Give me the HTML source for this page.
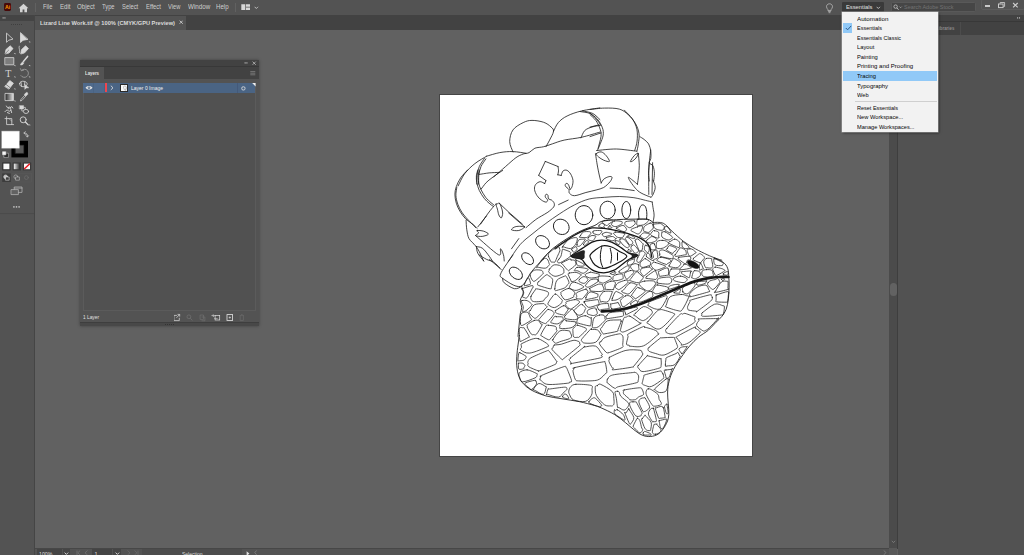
<!DOCTYPE html>
<html>
<head>
<meta charset="utf-8">
<title>Lizard Line Work.tif @ 100% (CMYK/GPU Preview)</title>
<style>
html,body{margin:0;padding:0;}
body{width:1024px;height:555px;overflow:hidden;position:relative;background:#616161;font-family:"Liberation Sans",sans-serif;font-size:6.4px;color:#d6d6d6;}
div,span,svg{position:absolute;box-sizing:border-box;}
.t{white-space:nowrap;line-height:8px;height:8px;}
#topbar{left:0;top:0;width:1024px;height:15px;background:#535353;}
#topbar .m{top:3.2px;color:#cecece;}
#tabbar{left:35px;top:15px;width:863px;height:14.5px;background:#424242;}
#doctab{left:0;top:1px;width:151px;height:13.5px;background:#535353;}
#toolbar{left:0;top:15px;width:35px;height:540px;background:#535353;border-right:1px solid #454545;}
#toolhead{left:0;top:0;width:34px;height:6px;background:#444444;}
#rightpanel{left:898px;top:15px;width:126px;height:540px;background:#525252;}
#vscroll{left:889px;top:29.5px;width:9px;height:519px;background:#4b4b4b;border-right:1px solid #3e3e3e;}
#statusbar{left:35px;top:548px;width:854px;height:7px;background:#535353;}
#artboard{left:439px;top:94px;width:314px;height:363px;background:#fff;border:1px solid #454545;}
#layers{left:80px;top:59.5px;width:178.5px;height:266.5px;background:#535353;box-shadow:0 0 3px rgba(0,0,0,0.35);}
#menu{left:842px;top:12.4px;width:96px;height:120px;background:#f2f2f2;box-shadow:0 0 0 0.5px #a8a8a8,1px 1px 2.5px rgba(0,0,0,0.55);color:#1a1a1a;}
#menu .t{left:14.7px;color:#050505;font-size:6.2px;}
</style>
</head>
<body>
<!-- canvas artboard -->
<div id="artboard"></div>
<svg style="left:440px;top:95px" width="312" height="361" viewBox="440 95 312 361" fill="none" stroke="#161616" stroke-linecap="round" stroke-linejoin="round">
<path d="M601.0 341.6C600.1 342.4 599.6 341.7 599.5 342.3C599.3 342.8 599.1 343.4 600.2 345.1C601.4 346.8 604.9 351.1 606.2 352.3C607.6 353.6 607.8 352.5 608.3 352.5C608.8 352.5 607.1 353.4 609.4 352.5C611.7 351.7 619.9 348.8 622.1 347.5C624.3 346.2 622.6 346.3 622.7 344.6C622.9 342.8 623.3 338.6 623.0 336.9C622.8 335.3 621.9 334.9 621.1 334.4C620.3 333.9 621.0 333.5 618.3 334.0C615.7 334.5 608.0 336.2 605.2 337.4C602.3 338.7 602.0 340.8 601.0 341.6ZM548.4 325.3C546.7 325.2 547.0 324.6 545.8 326.1C544.6 327.6 541.7 332.7 541.0 334.4C540.4 336.1 540.8 335.3 542.0 336.2C543.2 337.1 546.9 339.2 548.3 339.7C549.7 340.1 548.8 340.4 550.2 339.0C551.6 337.6 555.7 332.8 556.7 331.3C557.8 329.8 556.6 330.6 556.4 329.8C556.2 329.0 556.9 327.3 555.6 326.5C554.2 325.8 550.0 325.4 548.4 325.3ZM654.4 244.3C654.1 243.4 654.7 243.2 654.0 243.3C653.2 243.4 650.6 243.8 650.2 244.8C649.7 245.9 650.4 248.9 651.4 249.6C652.4 250.3 655.5 249.8 656.0 249.0C656.5 248.1 654.7 245.3 654.4 244.3ZM646.0 245.3C645.7 245.3 645.1 245.1 644.9 245.8C644.6 246.5 644.2 248.5 644.5 249.6C644.9 250.7 646.4 251.9 647.1 252.4C647.7 252.8 647.9 252.6 648.2 252.3C648.6 252.1 648.9 251.8 649.1 250.8C649.2 249.8 649.4 247.2 649.0 246.4C648.7 245.6 647.2 246.0 646.7 245.8C646.2 245.6 646.3 245.3 646.0 245.3ZM634.6 221.4C634.5 220.8 635.7 220.7 634.2 220.7C632.8 220.7 627.5 221.1 625.9 221.6C624.4 222.2 624.7 223.4 624.9 224.2C625.2 225.0 626.4 226.0 627.3 226.6C628.2 227.2 628.9 228.0 630.2 227.6C631.5 227.2 634.3 225.2 635.0 224.1C635.8 223.1 634.7 222.0 634.6 221.4ZM607.0 315.5C606.3 316.1 605.8 315.7 605.7 316.2C605.7 316.7 606.4 318.1 606.8 318.5C607.1 318.9 605.4 318.9 607.7 318.6C610.1 318.3 618.4 317.0 621.1 316.5C623.7 316.0 623.2 315.7 623.6 315.4C624.1 315.1 623.7 315.5 623.6 314.8C623.5 314.1 623.2 311.7 623.0 311.1C622.8 310.5 624.5 311.1 622.3 311.4C620.1 311.6 612.4 312.0 609.8 312.7C607.3 313.4 607.7 314.9 607.0 315.5ZM609.7 357.2C607.0 358.7 609.7 358.1 609.6 358.9C609.5 359.6 608.5 360.1 609.0 361.5C609.4 363.0 611.4 366.5 612.2 367.6C612.9 368.7 613.3 367.9 613.5 368.2C613.7 368.6 610.3 369.9 613.4 369.8C616.4 369.6 628.3 367.9 631.7 367.2C635.1 366.6 632.1 368.0 633.9 366.0C635.7 363.9 641.1 357.3 642.4 355.1C643.8 352.9 642.1 353.4 642.0 352.9C641.9 352.3 642.3 352.3 641.9 351.9C641.5 351.4 642.4 350.5 639.7 350.2C637.0 350.0 630.9 349.2 625.9 350.4C620.8 351.6 612.4 355.8 609.7 357.2ZM648.3 321.2C646.7 323.0 646.8 322.3 646.9 322.7C646.9 323.2 646.3 322.7 648.4 323.8C650.6 324.8 655.4 330.3 659.6 328.9C663.8 327.6 671.3 318.3 673.7 315.7C676.0 313.1 674.0 314.0 673.6 313.5C673.3 312.9 673.3 313.0 671.6 312.5C669.9 311.9 665.4 310.5 663.5 310.0C661.6 309.5 661.4 309.4 660.2 309.7C659.1 309.9 658.4 309.8 656.4 311.7C654.4 313.7 649.8 319.3 648.3 321.2ZM576.0 260.0C574.8 259.4 575.8 259.7 576.1 260.5C576.3 261.4 576.3 264.4 577.5 265.3C578.7 266.2 582.1 266.3 583.1 266.1C584.2 265.9 585.0 265.2 583.8 264.2C582.6 263.2 577.3 260.6 576.0 260.0ZM535.8 380.9C535.4 380.3 535.9 380.1 534.2 380.4C532.5 380.7 527.2 382.0 525.7 382.8C524.3 383.5 524.9 384.2 525.4 385.0C526.0 385.8 527.9 387.0 529.0 387.8C530.0 388.5 530.5 390.0 531.7 389.4C533.0 388.8 535.7 385.6 536.4 384.2C537.0 382.8 536.1 381.5 535.8 380.9ZM712.3 297.4C712.4 296.5 711.8 296.4 711.4 295.9C710.9 295.5 712.9 294.3 709.6 294.9C706.3 295.6 694.7 298.8 691.4 299.9C688.1 300.9 690.7 300.4 690.0 301.5C689.4 302.6 688.1 305.4 687.7 306.4C687.3 307.5 687.5 307.3 687.6 307.9C687.8 308.5 687.3 309.6 688.7 310.1C690.2 310.7 695.0 311.0 696.3 311.2C697.7 311.4 694.6 313.1 697.0 311.5C699.3 309.8 708.0 303.5 710.6 301.2C713.1 298.8 712.1 298.3 712.3 297.4ZM599.3 225.1C598.8 225.6 598.7 226.3 598.7 226.6C598.8 227.0 598.5 226.7 599.5 227.0C600.5 227.2 603.7 228.1 604.5 228.0C605.2 227.8 603.7 226.8 603.8 226.3C603.9 225.8 605.2 225.4 604.8 224.9C604.4 224.4 602.6 223.3 601.7 223.3C600.8 223.3 599.8 224.5 599.3 225.1ZM690.6 272.0C690.9 271.1 691.1 272.2 691.2 272.0C691.2 271.9 692.5 271.0 690.9 270.9C689.4 270.9 683.3 271.5 681.7 271.7C680.2 272.0 681.6 272.3 681.6 272.5C681.5 272.7 681.2 272.9 681.3 273.1C681.4 273.3 681.1 273.2 682.2 273.9C683.4 274.6 686.9 276.8 688.2 277.4C689.4 278.0 689.0 278.3 689.4 277.4C689.9 276.5 690.3 272.9 690.6 272.0ZM689.9 248.7C689.1 248.6 688.3 249.1 687.9 249.4C687.4 249.7 686.9 249.4 687.1 250.4C687.3 251.4 688.2 254.4 688.9 255.4C689.5 256.3 689.8 256.4 690.9 256.0C691.9 255.7 694.2 253.8 695.0 253.3C695.9 252.7 696.4 253.1 696.0 252.5C695.7 251.9 694.0 250.3 693.0 249.7C692.0 249.0 690.8 248.7 689.9 248.7ZM538.3 370.9C540.2 371.5 537.3 371.6 540.0 370.5C542.8 369.5 552.0 365.9 554.7 364.6C557.4 363.4 555.7 363.7 556.1 363.2C556.4 362.6 556.9 361.8 556.9 361.4C556.9 361.0 557.5 362.4 556.2 360.7C554.9 359.0 550.8 352.8 549.1 351.2C547.5 349.6 549.2 350.1 546.1 351.2C543.1 352.3 533.9 356.2 530.9 357.9C527.8 359.7 528.4 361.0 527.9 361.8C527.4 362.7 528.0 362.3 528.2 363.1C528.3 363.9 526.9 365.3 528.6 366.6C530.3 367.9 536.4 370.2 538.3 370.9ZM555.4 294.1C554.7 294.1 554.5 294.1 553.3 295.5C552.1 297.0 548.9 301.2 548.2 302.9C547.4 304.5 547.9 304.4 548.9 305.2C549.9 306.0 552.4 307.8 554.4 307.6C556.4 307.4 559.4 305.0 560.7 303.9C561.9 302.9 561.9 302.0 562.1 301.3C562.4 300.7 562.8 300.9 562.0 299.9C561.2 298.9 558.6 296.3 557.5 295.3C556.4 294.4 556.2 294.1 555.4 294.1ZM654.4 230.7C653.5 230.4 654.0 230.2 653.4 230.6C652.9 231.0 651.5 232.4 651.1 233.2C650.7 234.0 650.0 234.4 651.1 235.2C652.1 236.0 656.0 237.8 657.4 238.1C658.7 238.5 659.0 237.5 659.2 237.4C659.4 237.2 658.7 238.0 658.6 237.2C658.5 236.3 659.3 233.3 658.6 232.2C657.9 231.1 655.3 231.0 654.4 230.7ZM549.5 269.0C549.0 269.7 549.3 269.9 549.2 270.5C549.1 271.0 548.0 271.5 549.0 272.5C550.0 273.4 552.7 276.1 555.0 276.3C557.3 276.5 561.5 274.6 563.0 273.7C564.4 272.9 563.8 272.0 563.9 271.1C563.9 270.2 564.0 269.3 563.3 268.4C562.6 267.4 560.9 266.0 559.5 265.4C558.0 264.8 555.8 264.7 554.6 264.8C553.3 265.0 552.9 265.6 552.0 266.3C551.2 267.0 549.9 268.3 549.5 269.0ZM579.8 279.1C579.2 279.8 579.0 280.0 578.9 280.5C578.9 280.9 578.8 281.4 579.7 281.9C580.6 282.3 582.9 283.7 584.3 283.3C585.7 283.0 587.5 280.5 588.0 279.7C588.4 278.8 587.1 278.7 586.8 278.3C586.6 277.9 587.1 277.5 586.4 277.2C585.8 277.0 584.1 276.4 583.0 276.8C581.9 277.1 580.5 278.5 579.8 279.1ZM538.4 338.7C535.9 338.0 534.6 338.4 531.9 339.2C529.1 340.0 523.8 342.6 522.0 343.5C520.2 344.4 521.1 344.0 521.1 344.6C521.0 345.2 521.6 346.3 521.5 347.2C521.5 348.1 519.4 349.0 520.8 350.0C522.2 351.0 525.4 353.6 529.8 353.1C534.2 352.5 544.2 348.2 547.3 346.8C550.3 345.5 548.3 345.8 548.1 345.2C548.0 344.6 548.0 344.3 546.4 343.2C544.8 342.1 540.8 339.4 538.4 338.7ZM651.6 291.5C650.7 291.1 649.5 291.2 647.4 292.4C645.4 293.7 641.0 297.6 639.5 299.1C637.9 300.7 637.9 301.0 638.2 301.5C638.5 302.0 638.9 302.6 641.1 301.9C643.4 301.2 649.6 298.6 651.5 297.4C653.5 296.2 652.8 295.8 652.8 294.8C652.9 293.9 652.5 291.9 651.6 291.5ZM558.9 259.1C558.3 260.1 557.1 261.3 557.4 261.9C557.6 262.5 558.4 263.4 560.4 262.6C562.5 261.8 568.2 258.3 569.8 256.9C571.5 255.5 570.2 254.8 570.3 253.9C570.3 253.1 571.5 252.8 570.3 252.0C569.2 251.2 564.9 249.8 563.5 249.4C562.2 249.0 562.9 248.5 562.4 249.6C562.0 250.7 561.6 254.5 561.0 256.1C560.4 257.7 559.5 258.2 558.9 259.1ZM602.4 234.0C601.9 234.6 602.8 235.4 603.2 235.9C603.6 236.3 603.5 236.8 604.8 236.7C606.0 236.6 609.5 235.5 610.7 235.0C611.8 234.5 611.8 234.0 611.8 233.7C611.9 233.4 611.8 233.5 610.9 233.3C609.9 233.1 607.5 232.2 606.1 232.3C604.7 232.4 602.9 233.4 602.4 234.0ZM562.6 396.4C562.4 397.0 562.4 397.2 563.2 397.6C564.1 398.0 566.9 398.8 567.8 398.8C568.7 398.9 568.8 398.5 568.7 397.9C568.5 397.3 567.3 395.7 567.0 395.1C566.6 394.6 567.1 394.8 566.6 394.6C566.2 394.4 565.2 393.8 564.5 394.1C563.8 394.4 562.8 395.8 562.6 396.4ZM572.1 250.0C572.5 250.5 573.1 252.4 573.9 252.3C574.7 252.2 576.6 250.2 577.0 249.4C577.5 248.7 576.8 248.3 576.7 247.9C576.5 247.4 576.3 246.8 576.1 246.6C576.0 246.4 576.4 246.2 575.6 246.7C574.8 247.2 572.0 248.8 571.4 249.3C570.8 249.9 571.7 249.6 572.1 250.0ZM633.0 401.8C631.9 401.8 630.3 401.6 629.9 402.5C629.4 403.3 629.4 404.7 630.4 407.0C631.4 409.2 634.0 414.3 635.7 415.8C637.4 417.3 639.8 416.0 640.7 415.8C641.7 415.5 641.1 415.1 641.3 414.5C641.5 414.0 642.6 414.4 641.9 412.5C641.1 410.6 637.9 405.1 637.0 403.3C636.0 401.6 636.9 402.3 636.3 402.0C635.6 401.8 634.1 401.7 633.0 401.8ZM564.9 316.0C564.0 317.2 564.6 317.2 564.8 317.7C564.9 318.1 564.2 318.4 565.8 318.7C567.4 319.1 572.4 319.9 574.4 319.7C576.5 319.5 578.1 319.0 577.8 317.4C577.6 315.7 574.2 311.2 573.1 309.8C572.1 308.5 572.2 309.2 571.7 309.4C571.1 309.5 571.0 309.6 569.9 310.7C568.8 311.8 565.7 314.9 564.9 316.0ZM531.0 296.3C530.4 298.0 531.0 299.3 531.6 300.2C532.1 301.1 532.7 301.5 534.6 301.7C536.4 301.9 541.3 301.5 542.9 301.1C544.5 300.7 543.3 300.3 544.1 299.5C544.9 298.7 546.8 297.2 547.6 296.1C548.3 295.0 548.8 293.7 548.5 292.9C548.2 292.0 548.0 291.7 545.9 291.0C543.9 290.3 538.3 289.0 536.5 288.8C534.7 288.6 536.1 288.8 535.2 290.0C534.3 291.3 531.6 294.6 531.0 296.3ZM648.9 347.5C647.0 349.4 648.2 349.4 648.3 350.0C648.4 350.7 648.3 350.9 649.5 351.5C650.8 352.1 653.3 352.9 655.7 353.5C658.1 354.1 660.8 355.8 664.1 355.0C667.5 354.3 673.7 350.3 675.9 349.0C678.1 347.7 677.1 347.5 677.4 347.0C677.6 346.5 677.8 347.1 677.4 345.8C676.9 344.5 675.4 340.4 674.8 339.0C674.1 337.6 675.8 337.6 673.5 337.4C671.3 337.2 663.7 337.7 661.4 337.9C659.1 338.1 661.7 337.0 659.7 338.6C657.6 340.2 650.8 345.6 648.9 347.5ZM574.8 367.6C570.2 368.7 574.5 368.2 574.2 368.8C573.9 369.4 572.8 369.6 573.0 371.3C573.2 373.1 574.4 377.8 575.3 379.4C576.3 381.0 575.9 380.7 578.7 380.9C581.5 381.2 588.7 381.0 592.1 380.8C595.5 380.5 597.0 380.5 599.4 379.2C601.7 377.9 604.9 374.2 606.2 373.0C607.4 371.7 607.0 373.4 606.8 371.6C606.7 369.9 605.9 364.1 605.1 362.5C604.2 360.9 606.9 361.3 601.9 362.1C596.8 362.9 579.4 366.4 574.8 367.6ZM650.1 223.1C648.8 223.5 645.6 225.2 644.5 226.4C643.4 227.6 643.7 229.4 643.6 230.2C643.5 231.0 643.0 230.7 643.8 231.1C644.7 231.5 647.4 232.7 648.8 232.4C650.1 232.1 651.1 230.1 651.9 229.4C652.7 228.7 653.3 228.9 653.4 228.1C653.5 227.2 652.9 225.0 652.3 224.1C651.8 223.3 651.4 222.7 650.1 223.1ZM681.3 294.5C678.6 294.7 672.6 295.0 670.1 296.8C667.6 298.5 667.0 303.3 666.3 305.0C665.7 306.6 664.1 306.0 666.0 306.9C668.0 307.9 675.4 310.3 678.1 310.7C680.8 311.2 680.5 311.9 682.3 309.6C684.0 307.4 687.9 299.7 688.6 297.4C689.3 295.1 687.5 296.1 686.3 295.7C685.0 295.2 683.9 294.3 681.3 294.5ZM635.6 313.2C634.0 314.6 633.7 314.6 633.6 315.0C633.6 315.5 633.9 315.2 635.5 316.1C637.1 317.0 640.7 321.1 643.4 320.6C646.2 320.2 650.5 315.3 651.9 313.6C653.2 311.9 651.6 310.9 651.5 310.3C651.3 309.6 652.4 310.4 651.1 309.8C649.8 309.2 646.2 306.1 643.6 306.6C641.0 307.2 637.3 311.8 635.6 313.2ZM715.3 267.1C713.9 267.1 713.5 268.2 713.1 268.6C712.7 269.1 712.4 268.6 712.8 269.7C713.2 270.8 714.6 274.5 715.5 275.3C716.4 276.2 716.4 275.6 718.0 274.8C719.5 274.1 723.7 271.7 724.7 270.9C725.7 270.0 724.5 270.1 724.0 269.8C723.5 269.4 723.1 269.0 721.7 268.6C720.3 268.2 716.7 267.1 715.3 267.1ZM597.4 385.7C596.7 385.9 596.6 385.5 596.2 385.8C595.9 386.1 595.2 385.8 595.2 387.5C595.3 389.1 594.9 392.8 596.5 395.7C598.1 398.6 602.1 403.1 604.5 404.8C606.9 406.5 609.5 405.8 610.9 405.9C612.2 406.1 612.1 406.1 612.6 405.7C613.1 405.3 613.8 404.9 614.0 403.7C614.2 402.5 614.1 400.5 613.8 398.5C613.5 396.5 614.5 394.0 612.3 391.6C610.1 389.3 603.0 385.3 600.6 384.3C598.1 383.3 598.1 385.4 597.4 385.7ZM577.0 244.5C576.7 245.5 576.9 246.0 577.5 246.2C578.1 246.4 579.2 246.6 580.4 245.6C581.7 244.5 584.3 241.0 585.0 239.9C585.7 238.9 584.9 239.1 584.6 239.0C584.3 238.9 584.4 239.0 583.4 239.2C582.5 239.3 579.9 239.0 578.8 239.9C577.8 240.8 577.2 243.4 577.0 244.5ZM548.3 309.4C547.3 309.2 548.1 309.0 546.8 310.4C545.5 311.8 541.6 316.1 540.3 317.8C539.0 319.5 538.3 319.5 539.0 320.4C539.7 321.4 543.2 323.1 544.5 323.4C545.9 323.7 545.5 323.8 547.0 322.4C548.5 320.9 552.7 316.4 553.6 314.6C554.6 312.8 553.8 312.2 552.9 311.3C552.0 310.4 549.3 309.5 548.3 309.4ZM624.7 280.4C623.0 280.9 619.3 282.1 617.7 283.2C616.2 284.3 615.5 286.1 615.3 287.1C615.2 288.0 616.3 288.4 617.0 288.7C617.7 289.1 617.9 290.3 619.7 289.3C621.4 288.4 626.2 284.4 627.6 283.0C628.9 281.7 627.6 281.7 627.7 281.3C627.8 280.8 628.7 280.4 628.2 280.3C627.7 280.1 626.5 279.9 624.7 280.4ZM527.1 369.8C524.2 369.7 520.7 371.3 519.5 372.6C518.2 374.0 519.3 376.3 519.8 377.9C520.3 379.4 520.1 381.9 522.6 381.9C525.1 381.9 532.6 379.0 535.0 377.9C537.4 376.8 536.7 375.8 537.0 375.2C537.4 374.7 537.2 374.6 537.1 374.3C537.0 374.0 538.2 374.2 536.6 373.5C534.9 372.7 529.9 370.0 527.1 369.8ZM575.9 384.3C572.6 384.5 572.0 385.5 570.8 386.6C569.6 387.8 569.0 389.7 568.8 391.0C568.6 392.3 568.8 393.2 569.6 394.7C570.4 396.1 570.9 398.8 573.5 399.9C576.1 401.0 582.4 402.2 585.4 401.4C588.3 400.7 590.3 397.4 591.4 395.3C592.5 393.3 592.1 390.8 592.0 389.1C592.0 387.5 593.6 386.2 590.9 385.4C588.2 384.6 579.3 384.1 575.9 384.3ZM700.1 263.4C699.9 263.5 700.2 263.5 700.1 264.0C699.9 264.5 699.3 265.4 699.2 266.5C699.2 267.6 699.6 269.9 699.8 270.4C700.1 270.9 700.1 269.8 700.7 269.6C701.3 269.3 703.0 269.1 703.4 268.8C703.8 268.5 703.3 268.9 703.0 268.0C702.6 267.1 701.5 264.2 701.0 263.5C700.6 262.7 700.2 263.3 700.1 263.4ZM540.8 376.5C540.5 377.3 539.8 379.1 539.8 379.7C539.8 380.4 539.4 379.5 540.8 380.3C542.2 381.1 543.5 384.0 548.0 384.4C552.5 384.9 564.1 383.6 567.7 383.2C571.2 382.8 568.8 382.4 569.5 382.0C570.1 381.6 571.9 382.9 571.6 380.7C571.2 378.6 568.2 371.5 567.3 369.3C566.3 367.0 566.6 367.8 565.9 367.4C565.2 367.0 567.2 365.5 563.1 366.9C559.1 368.2 545.4 373.8 541.7 375.4C538.0 377.0 541.1 375.8 540.8 376.5ZM663.0 373.9C662.7 373.1 662.1 372.3 661.5 371.8C661.0 371.3 662.3 370.6 659.6 371.1C656.9 371.6 647.8 373.9 645.2 374.8C642.6 375.7 644.4 375.2 643.9 376.3C643.5 377.4 642.9 380.2 642.6 381.5C642.3 382.7 641.8 383.3 642.3 384.0C642.8 384.6 643.9 385.1 645.4 385.5C647.0 385.9 648.7 387.5 651.6 386.4C654.5 385.3 660.8 380.7 662.7 379.1C664.7 377.4 663.5 377.5 663.6 376.6C663.6 375.8 663.4 374.7 663.0 373.9ZM682.8 291.5C682.7 292.5 682.3 292.1 683.1 292.5C684.0 292.8 685.9 294.7 687.9 293.6C689.8 292.5 693.7 287.6 694.8 285.9C695.8 284.2 694.7 284.0 694.4 283.4C694.0 282.8 694.4 281.7 692.5 282.3C690.7 282.9 684.9 285.4 683.3 287.0C681.7 288.5 682.8 290.6 682.8 291.5ZM607.6 379.0C606.7 380.2 607.1 381.8 607.1 382.4C607.1 383.1 606.4 382.1 607.6 383.0C608.9 384.0 612.7 387.6 614.6 388.2C616.4 388.8 615.1 387.5 618.7 386.6C622.3 385.7 633.0 383.8 636.2 382.8C639.4 381.8 637.7 382.0 638.1 380.8C638.5 379.7 638.8 377.2 638.6 375.9C638.3 374.6 637.4 373.7 636.7 373.2C636.0 372.6 635.2 372.4 634.4 372.3C633.7 372.2 635.9 372.1 632.3 372.6C628.6 373.0 616.8 374.0 612.7 375.0C608.6 376.1 608.6 377.7 607.6 379.0ZM665.4 365.0C665.4 366.1 665.6 366.5 665.9 366.7C666.2 366.9 665.5 366.3 667.0 366.0C668.4 365.6 672.6 366.2 674.7 364.7C676.9 363.1 679.2 358.2 680.0 356.8C680.9 355.3 680.1 356.7 679.8 356.0C679.4 355.2 678.4 352.7 677.8 352.3C677.2 351.9 678.0 352.7 676.2 353.5C674.4 354.4 668.7 356.4 667.0 357.4C665.2 358.4 666.1 358.4 665.9 359.7C665.6 360.9 665.3 363.8 665.4 365.0ZM588.9 401.7C588.6 402.5 588.3 402.5 590.1 403.4C591.8 404.3 597.6 406.5 599.4 406.9C601.2 407.3 600.5 406.2 600.8 405.9C601.2 405.6 602.4 406.2 601.5 404.9C600.6 403.6 596.9 399.3 595.3 398.2C593.8 397.2 593.2 398.0 592.1 398.6C591.0 399.2 589.2 400.9 588.9 401.7ZM637.6 257.7C637.3 258.5 636.9 259.7 636.8 260.4C636.6 261.0 636.4 261.2 636.9 261.5C637.3 261.8 638.5 263.0 639.6 262.1C640.7 261.3 642.5 257.9 643.5 256.4C644.4 255.0 645.3 254.3 645.2 253.4C645.1 252.5 643.6 251.2 642.6 251.0C641.6 250.9 639.8 252.2 639.3 252.6C638.7 253.0 639.1 252.9 639.1 253.4C639.0 253.9 639.4 254.8 639.1 255.5C638.9 256.2 638.0 256.9 637.6 257.7ZM630.8 303.6C630.1 304.2 630.7 303.6 630.8 303.9C631.0 304.3 630.7 305.8 631.8 305.7C632.9 305.6 636.3 304.0 637.3 303.5C638.2 303.0 637.7 303.3 637.6 302.9C637.6 302.4 637.2 301.0 636.7 300.7C636.3 300.3 635.9 300.2 634.9 300.7C633.9 301.2 631.5 303.1 630.8 303.6ZM625.5 313.2C625.6 313.8 625.1 314.9 625.7 314.9C626.4 314.9 627.4 314.1 629.3 313.1C631.2 312.1 635.8 309.9 637.1 309.0C638.3 308.2 637.2 308.3 637.0 307.9C636.8 307.6 637.9 306.8 635.8 307.2C633.8 307.5 626.3 309.4 624.4 310.1C622.6 310.8 624.6 310.7 624.8 311.3C624.9 311.8 625.3 312.6 625.5 313.2ZM530.4 310.4C529.5 311.7 528.5 311.2 529.0 312.3C529.4 313.5 531.8 316.2 533.1 317.1C534.4 317.9 534.5 319.1 536.6 317.6C538.8 316.0 544.3 309.7 546.0 307.9C547.8 306.1 547.3 307.4 547.1 306.8C546.8 306.2 545.3 304.8 544.6 304.3C543.9 303.7 544.5 303.5 542.8 303.6C541.1 303.7 536.4 303.7 534.3 304.8C532.2 306.0 531.3 309.2 530.4 310.4ZM533.4 389.3C532.8 390.5 533.6 389.7 535.3 390.5C536.9 391.4 541.7 394.8 543.5 394.3C545.3 393.8 545.6 388.9 546.1 387.6C546.5 386.4 547.3 387.5 546.1 386.8C544.9 386.2 540.9 383.1 538.8 383.5C536.7 384.0 534.0 388.2 533.4 389.3ZM585.9 289.1C584.2 289.6 578.1 291.6 576.6 292.8C575.1 294.0 576.9 295.3 576.8 296.2C576.8 297.1 575.5 297.9 576.2 298.4C576.9 298.9 580.0 299.0 581.1 299.0C582.2 299.0 581.5 299.7 582.7 298.5C583.8 297.3 587.3 293.2 587.9 291.8C588.6 290.4 587.0 290.6 586.6 290.1C586.3 289.7 587.5 288.7 585.9 289.1ZM619.1 271.3C618.0 272.4 619.2 272.5 619.9 272.7C620.6 273.0 621.9 273.3 623.3 272.8C624.7 272.3 627.4 270.8 628.3 269.7C629.3 268.7 629.4 267.0 629.1 266.4C628.7 265.8 628.1 265.4 626.5 266.2C624.8 267.0 620.2 270.2 619.1 271.3ZM659.8 254.1C660.0 255.0 658.4 255.5 660.4 256.3C662.3 257.0 669.4 258.7 671.6 258.7C673.7 258.8 673.0 257.5 673.2 256.8C673.3 256.2 674.0 256.1 672.5 255.0C670.9 253.9 666.1 250.9 663.9 250.2C661.7 249.5 660.2 250.2 659.5 250.9C658.8 251.5 659.7 253.2 659.8 254.1ZM667.0 404.1C666.7 404.0 665.8 404.6 665.4 405.1C665.0 405.5 664.4 405.6 664.5 406.9C664.6 408.1 665.6 411.6 666.1 412.8C666.5 413.9 666.9 413.8 667.3 413.8C667.6 413.7 668.2 413.7 668.2 412.3C668.1 410.9 667.3 406.7 667.1 405.3C666.9 404.0 667.2 404.1 667.0 404.1ZM585.2 315.7C583.3 315.7 580.1 316.8 578.7 317.7C577.4 318.5 577.5 319.7 577.1 320.6C576.8 321.6 576.5 322.8 576.7 323.3C576.9 323.7 576.2 322.8 578.3 323.2C580.3 323.7 586.9 325.6 589.0 325.8C591.2 326.0 590.6 325.8 590.9 324.4C591.3 323.1 591.4 318.7 591.3 317.6C591.2 316.6 591.5 318.4 590.5 318.1C589.5 317.8 587.2 315.8 585.2 315.7ZM657.7 285.0C655.9 284.8 656.8 284.6 656.0 285.5C655.2 286.3 653.6 288.8 653.1 289.9C652.5 290.9 652.5 291.1 652.9 291.7C653.3 292.4 654.3 293.5 655.5 293.7C656.6 293.9 657.9 293.7 660.0 293.1C662.0 292.4 666.6 290.9 667.9 290.0C669.2 289.0 667.9 287.9 667.6 287.3C667.3 286.8 667.9 287.1 666.3 286.7C664.6 286.4 659.4 285.2 657.7 285.0ZM644.6 327.1C642.4 326.5 645.2 325.7 642.5 326.9C639.8 328.0 630.7 332.4 628.3 334.0C625.9 335.6 628.4 334.8 628.1 336.5C627.8 338.2 626.3 342.7 626.5 344.1C626.6 345.6 628.6 344.9 629.2 345.3C629.8 345.6 627.7 346.2 630.1 346.2C632.5 346.3 639.0 347.7 643.6 345.8C648.2 343.9 655.3 336.7 657.8 334.8C660.2 332.8 658.6 334.7 658.2 334.0C657.9 333.3 658.0 331.6 655.7 330.5C653.5 329.3 646.8 327.7 644.6 327.1ZM638.6 272.9C637.7 272.0 638.5 271.8 638.0 271.7C637.6 271.6 637.0 271.2 635.9 272.3C634.7 273.4 632.2 276.8 631.2 278.2C630.1 279.5 629.8 279.8 629.7 280.2C629.6 280.7 629.2 280.4 630.6 280.8C632.1 281.2 636.3 283.0 638.3 282.7C640.2 282.4 641.4 280.0 642.2 279.1C643.0 278.2 643.8 278.3 643.2 277.3C642.6 276.3 639.5 273.8 638.6 272.9ZM702.5 312.6C700.4 314.3 701.9 313.3 702.0 313.9C702.2 314.5 700.1 316.1 703.3 316.3C706.6 316.5 718.0 315.5 721.4 315.0C724.7 314.4 723.0 314.5 723.5 313.1C724.0 311.7 724.5 308.0 724.4 306.8C724.3 305.5 724.5 306.1 722.8 305.7C721.2 305.3 718.0 303.1 714.6 304.2C711.2 305.4 704.6 311.0 702.5 312.6ZM519.5 335.8C519.5 337.4 519.5 336.8 519.5 337.7C519.6 338.5 519.7 340.3 520.0 341.0C520.2 341.6 519.5 341.9 520.9 341.3C522.3 340.7 527.0 338.3 528.3 337.4C529.7 336.6 529.8 337.9 529.1 336.3C528.4 334.8 525.3 329.6 524.3 328.2C523.3 326.8 524.1 327.9 523.3 327.9C522.5 327.9 520.1 326.8 519.5 328.1C518.8 329.4 519.5 334.2 519.5 335.8ZM554.2 345.1C552.9 345.7 553.5 346.9 553.1 347.7C552.8 348.4 550.9 348.0 552.2 349.7C553.4 351.5 559.0 356.4 560.6 358.1C562.3 359.7 561.5 359.6 562.1 359.7C562.7 359.7 561.3 360.5 564.1 358.3C566.8 356.0 576.3 348.6 578.9 346.2C581.5 343.8 579.6 344.7 579.7 344.0C579.8 343.4 579.7 342.7 579.5 342.2C579.2 341.7 579.2 341.6 578.1 341.3C577.0 341.0 575.9 339.9 573.1 340.4C570.3 340.9 564.4 343.4 561.3 344.2C558.1 345.0 555.6 344.6 554.2 345.1ZM678.8 257.4C677.2 257.8 678.3 258.4 678.2 258.6C678.2 258.9 677.6 258.3 678.5 259.1C679.3 259.8 682.4 262.2 683.6 262.9C684.9 263.7 685.3 264.1 686.0 263.6C686.6 263.1 686.9 260.7 687.5 260.1C688.2 259.5 689.3 260.2 689.8 260.0C690.4 259.8 690.7 259.4 690.8 258.9C690.9 258.4 690.9 257.3 690.4 256.9C689.9 256.5 689.8 256.2 687.9 256.3C685.9 256.4 680.4 257.1 678.8 257.4ZM604.2 291.4C602.4 291.9 601.9 293.5 601.1 294.6C600.3 295.6 599.6 296.3 599.6 297.6C599.5 298.9 600.4 301.6 600.8 302.2C601.2 302.9 600.7 301.6 601.9 301.5C603.1 301.4 606.4 302.9 608.1 301.5C609.8 300.1 611.2 294.8 611.9 293.1C612.5 291.5 613.3 291.8 612.0 291.5C610.7 291.2 606.0 290.9 604.2 291.4ZM657.2 282.3C657.3 282.8 656.2 282.9 658.0 283.2C659.7 283.5 665.6 284.2 667.8 284.1C670.0 283.9 670.5 283.2 671.1 282.5C671.8 281.7 671.9 280.1 671.8 279.4C671.7 278.7 671.2 278.4 670.6 278.0C670.0 277.7 670.1 277.1 668.3 277.1C666.4 277.1 661.3 277.6 659.5 278.2C657.6 278.8 657.7 279.8 657.3 280.5C656.9 281.2 657.0 281.9 657.2 282.3ZM665.9 370.0C664.6 370.2 664.3 369.5 664.3 370.6C664.3 371.6 665.5 375.1 665.8 376.3C666.1 377.5 665.5 377.5 666.0 377.7C666.5 377.9 668.0 378.9 669.0 377.4C670.0 376.0 671.5 370.3 672.0 368.9C672.6 367.5 673.3 369.0 672.2 369.2C671.2 369.4 667.2 369.8 665.9 370.0ZM588.5 237.5C587.9 238.2 587.7 239.0 588.1 239.5C588.4 240.0 589.9 240.4 590.8 240.6C591.6 240.8 592.3 241.2 593.1 240.6C593.9 240.0 595.2 237.7 595.6 236.9C596.0 236.2 596.3 236.4 595.7 236.1C595.1 235.9 593.1 235.3 592.0 235.5C590.8 235.7 589.2 236.8 588.5 237.5ZM637.4 418.2C636.8 418.1 636.9 418.7 636.2 420.0C635.5 421.3 633.5 424.8 633.2 426.1C632.9 427.5 633.3 426.7 634.4 427.9C635.5 429.0 638.4 432.6 639.8 432.9C641.2 433.2 642.5 430.5 642.8 429.7C643.1 428.9 642.2 429.6 641.7 428.0C641.2 426.5 640.5 422.1 639.8 420.5C639.0 418.8 638.0 418.3 637.4 418.2ZM584.4 301.5C582.3 302.0 584.5 302.4 584.5 302.6C584.5 302.7 583.6 301.4 584.2 302.2C584.9 303.0 586.2 306.8 588.4 307.3C590.5 307.7 595.5 305.6 597.3 305.0C599.0 304.5 599.0 304.7 599.1 303.8C599.2 302.9 598.3 300.4 597.9 299.7C597.5 299.1 598.9 299.4 596.6 299.7C594.4 300.0 586.4 301.1 584.4 301.5ZM624.2 390.0C621.6 390.6 623.6 391.0 623.5 391.7C623.5 392.4 622.9 392.9 623.9 394.1C624.9 395.3 628.3 398.0 629.3 398.9C630.4 399.9 629.0 399.8 630.0 399.9C631.1 400.0 634.1 400.0 635.5 399.6C636.9 399.1 637.3 397.8 638.6 397.0C639.8 396.3 642.3 395.7 643.1 395.0C643.9 394.3 643.6 393.7 643.4 392.7C643.2 391.7 642.7 390.0 642.0 389.1C641.3 388.3 642.2 387.7 639.2 387.8C636.2 388.0 626.8 389.3 624.2 390.0ZM598.9 309.8C599.3 310.5 599.4 310.6 599.8 310.5C600.2 310.5 599.9 309.9 601.3 309.6C602.7 309.3 606.7 309.0 608.0 308.8C609.3 308.7 609.2 309.7 609.2 308.8C609.2 307.9 608.4 304.3 608.1 303.4C607.9 302.5 608.7 303.4 607.6 303.5C606.5 303.6 603.3 303.5 601.6 303.9C599.9 304.4 597.8 305.2 597.3 306.1C596.9 307.1 598.5 309.1 598.9 309.8ZM609.7 276.5C607.8 276.1 601.8 275.8 599.9 276.1C597.9 276.4 598.5 277.4 598.3 278.3C598.1 279.2 598.4 281.0 598.7 281.6C599.1 282.3 599.6 282.1 600.4 282.3C601.2 282.5 602.1 283.4 603.7 283.0C605.3 282.5 608.7 280.3 609.9 279.6C611.2 278.9 611.1 278.9 611.4 278.7C611.6 278.5 611.8 278.6 611.5 278.3C611.2 277.9 611.6 276.9 609.7 276.5ZM524.5 284.0C524.0 285.1 524.3 285.1 524.4 285.4C524.4 285.6 523.7 285.9 524.6 285.7C525.4 285.6 528.5 285.0 529.5 284.5C530.5 284.1 530.6 284.3 530.5 283.2C530.4 282.1 529.3 278.8 528.7 278.0C528.2 277.2 527.9 277.5 527.2 278.5C526.5 279.5 524.9 282.9 524.5 284.0ZM645.3 258.6C644.4 258.0 645.5 258.1 644.6 258.8C643.7 259.6 640.5 261.5 640.1 262.9C639.6 264.3 640.3 267.0 641.9 267.4C643.6 267.8 648.4 265.9 649.8 265.2C651.2 264.5 650.3 263.5 650.4 263.0C650.5 262.4 651.2 262.8 650.4 262.1C649.5 261.3 646.3 259.1 645.3 258.6ZM655.4 262.5C653.5 262.0 654.3 261.9 653.6 262.4C652.8 262.8 650.8 264.0 650.9 265.2C651.1 266.4 653.6 268.8 654.7 269.6C655.7 270.4 655.7 270.4 657.4 270.0C659.1 269.6 663.7 267.8 664.9 267.0C666.1 266.3 666.1 266.3 664.5 265.6C662.9 264.8 657.2 263.1 655.4 262.5ZM612.4 298.2C611.8 299.8 611.9 300.5 611.9 300.9C612.0 301.2 611.8 300.6 612.7 300.4C613.5 300.2 615.6 300.4 617.2 299.6C618.9 298.9 621.9 296.9 622.8 296.0C623.6 295.1 623.1 295.0 622.3 294.4C621.6 293.8 619.2 292.7 618.1 292.2C616.9 291.8 616.3 290.8 615.4 291.8C614.4 292.8 613.0 296.7 612.4 298.2ZM665.1 231.8C663.4 231.0 662.6 232.2 662.1 232.2C661.6 232.3 661.9 231.4 661.9 232.2C661.9 233.0 661.0 235.7 662.0 237.0C663.0 238.3 666.5 239.7 668.1 240.0C669.7 240.2 671.1 238.9 671.8 238.4C672.4 237.9 673.3 237.8 672.2 236.7C671.1 235.6 666.8 232.5 665.1 231.8ZM674.5 292.3C673.4 292.9 673.6 292.5 673.6 292.6C673.6 292.7 673.6 292.9 674.6 293.0C675.6 293.1 678.7 293.3 679.6 293.1C680.5 292.8 679.7 292.2 679.9 291.7C680.0 291.2 680.6 290.6 680.5 290.1C680.5 289.7 680.7 288.8 679.7 289.2C678.7 289.5 675.5 291.7 674.5 292.3ZM678.7 286.1C680.1 285.5 678.8 285.3 678.9 285.0C678.9 284.7 679.8 284.4 679.0 284.4C678.2 284.3 675.8 284.4 674.2 284.7C672.6 285.0 670.5 285.5 669.5 286.1C668.6 286.8 668.5 288.0 668.6 288.5C668.7 289.0 668.5 289.4 670.2 289.0C671.9 288.6 677.3 286.8 678.7 286.1ZM589.7 288.4C588.3 289.2 590.0 288.7 590.2 289.2C590.4 289.6 589.1 290.6 590.9 291.0C592.8 291.4 598.9 291.7 601.1 291.4C603.2 291.1 603.5 290.2 603.8 289.2C604.0 288.2 602.7 286.0 602.5 285.3C602.4 284.5 603.4 285.0 602.8 284.8C602.1 284.6 600.7 283.6 598.5 284.2C596.4 284.8 591.1 287.6 589.7 288.4ZM646.6 256.8C647.7 258.1 652.4 260.6 653.6 261.0C654.7 261.5 653.0 260.3 653.6 259.7C654.3 259.1 657.0 259.0 657.6 257.5C658.1 256.1 657.3 252.2 657.0 250.9C656.8 249.7 657.0 249.8 656.2 250.0C655.4 250.2 653.0 250.9 652.5 252.0C652.1 253.2 653.5 255.8 653.5 256.9C653.5 258.0 652.9 258.2 652.4 258.4C652.0 258.6 651.1 258.8 650.6 258.1C650.2 257.4 650.2 255.2 649.7 254.3C649.1 253.5 647.8 252.9 647.3 253.3C646.8 253.7 645.6 255.5 646.6 256.8ZM662.3 240.4C661.1 240.3 659.8 240.4 658.9 240.7C658.0 241.0 657.2 241.2 656.7 242.2C656.3 243.2 656.2 245.8 656.4 246.8C656.6 247.9 656.8 248.3 658.0 248.5C659.2 248.7 661.8 248.6 663.5 247.9C665.2 247.1 667.9 245.3 668.4 244.2C668.9 243.1 667.6 241.8 666.6 241.2C665.5 240.5 663.6 240.5 662.3 240.4ZM666.9 328.3C664.6 331.0 665.8 330.4 665.9 331.2C665.9 332.0 665.9 332.8 667.4 333.1C668.9 333.5 670.5 334.9 674.9 333.3C679.2 331.6 690.1 325.5 693.4 323.2C696.7 320.9 694.4 320.4 694.6 319.4C694.9 318.3 695.2 317.5 695.0 317.0C694.8 316.5 695.0 316.9 693.3 316.3C691.6 315.7 686.8 313.8 685.0 313.4C683.3 313.1 683.6 313.9 682.7 314.1C681.8 314.4 682.3 312.5 679.6 314.8C677.0 317.2 669.2 325.6 666.9 328.3ZM554.8 288.8C554.5 290.5 555.0 290.2 555.3 290.5C555.6 290.8 555.2 290.8 556.8 290.4C558.3 290.0 563.0 288.8 564.7 287.9C566.4 287.0 566.3 286.1 567.1 285.2C567.8 284.3 569.1 283.9 569.0 282.5C568.9 281.1 567.0 277.6 566.3 276.6C565.5 275.5 566.1 275.5 564.5 276.2C563.0 276.8 558.5 278.2 556.9 280.3C555.3 282.4 555.1 287.1 554.8 288.8ZM663.3 407.7C662.5 405.9 661.6 406.4 660.5 406.5C659.4 406.5 657.6 407.4 656.7 407.8C655.8 408.1 655.0 406.8 655.3 408.5C655.6 410.2 657.8 416.3 658.6 417.9C659.4 419.5 659.1 418.2 660.0 418.2C661.0 418.2 663.5 418.0 664.3 417.8C665.2 417.6 665.2 418.8 665.1 417.1C664.9 415.5 664.0 409.4 663.3 407.7ZM638.0 219.3C636.3 219.4 637.5 219.1 637.3 219.7C637.1 220.2 636.7 221.6 636.8 222.5C636.8 223.4 636.2 224.9 637.4 225.2C638.5 225.6 641.8 225.4 643.6 224.8C645.4 224.1 647.5 221.9 648.3 221.2C649.1 220.4 648.5 220.5 648.3 220.2C648.2 219.9 649.1 219.4 647.4 219.3C645.7 219.1 639.7 219.3 638.0 219.3ZM708.2 282.4C707.6 283.2 707.3 283.9 707.8 284.9C708.3 285.9 710.1 287.7 711.1 288.4C712.1 289.1 712.4 290.0 713.8 289.1C715.2 288.2 718.5 284.1 719.5 282.9C720.5 281.6 719.9 282.2 719.6 281.5C719.3 280.8 718.6 279.0 717.9 278.6C717.1 278.3 716.3 279.3 715.1 279.6C714.0 279.9 712.2 279.9 711.0 280.4C709.9 280.9 708.7 281.7 708.2 282.4ZM609.8 225.8C609.3 225.8 608.8 226.2 608.5 226.6C608.3 227.0 607.8 228.1 608.3 228.3C608.9 228.5 611.3 228.1 611.7 227.9C612.2 227.6 611.4 227.0 611.1 226.7C610.8 226.3 610.2 225.8 609.8 225.8ZM614.6 271.7C613.7 271.9 610.8 273.3 610.2 273.6C609.5 274.0 610.1 273.5 610.5 273.7C611.0 273.9 612.0 274.7 612.8 274.6C613.6 274.5 615.1 273.7 615.5 273.3C616.0 272.8 615.7 272.3 615.6 272.0C615.4 271.7 615.5 271.4 614.6 271.7ZM522.2 300.5C521.2 300.5 521.2 300.1 521.3 301.1C521.5 302.2 523.1 305.2 523.3 306.8C523.5 308.5 522.6 310.1 522.6 310.9C522.6 311.8 522.3 311.9 523.1 311.8C523.8 311.6 525.5 311.2 526.9 310.1C528.4 309.0 530.8 306.3 531.6 305.3C532.3 304.3 532.3 304.8 531.6 304.0C530.9 303.3 528.9 301.3 527.3 300.7C525.8 300.1 523.2 300.4 522.2 300.5ZM669.3 265.3C668.6 266.5 668.8 266.2 668.9 266.4C669.0 266.7 668.4 266.5 669.8 266.7C671.2 266.9 675.3 268.2 677.2 267.6C679.0 267.0 681.2 264.7 680.8 263.2C680.3 261.7 675.8 259.3 674.5 258.7C673.1 258.1 673.7 258.3 672.9 259.4C672.0 260.5 670.0 264.1 669.3 265.3ZM638.6 264.8C638.4 264.2 637.8 264.4 637.2 264.2C636.6 264.1 636.1 263.4 635.0 263.6C633.9 263.9 631.3 264.8 630.8 265.6C630.2 266.5 630.8 267.8 631.5 268.8C632.3 269.7 634.0 271.0 635.3 271.2C636.5 271.4 638.3 270.5 638.8 269.9C639.4 269.3 638.8 268.5 638.7 267.7C638.7 266.8 638.8 265.3 638.6 264.8ZM631.7 245.9C631.4 246.5 630.7 247.4 630.9 248.2C631.1 248.9 632.1 249.6 632.7 250.4C633.3 251.2 633.8 252.6 634.5 253.0C635.2 253.4 636.1 253.2 636.8 252.8C637.4 252.3 638.8 251.6 638.5 250.4C638.1 249.2 635.5 246.4 634.6 245.5C633.7 244.6 633.6 244.8 633.1 244.9C632.6 244.9 632.1 245.4 631.7 245.9ZM556.2 316.7C554.9 316.6 555.6 315.6 554.8 316.3C554.0 317.0 552.2 320.0 551.5 320.9C550.8 321.9 550.8 321.6 550.8 321.9C550.8 322.2 550.3 322.6 551.5 322.9C552.7 323.2 555.9 324.3 557.8 323.8C559.7 323.3 562.1 320.7 562.9 319.9C563.8 319.2 563.0 319.7 563.0 319.2C562.9 318.7 563.6 317.4 562.4 317.0C561.3 316.6 557.5 316.8 556.2 316.7ZM590.1 272.3C589.0 272.7 585.2 273.8 585.1 274.7C585.0 275.7 587.5 277.5 589.6 277.9C591.8 278.3 596.4 277.5 598.0 276.9C599.6 276.3 599.0 274.9 599.2 274.5C599.3 274.0 600.0 274.3 598.8 274.0C597.6 273.6 593.1 272.7 591.7 272.4C590.3 272.2 591.2 271.9 590.1 272.3ZM568.6 288.4C566.4 288.4 562.6 291.1 561.3 291.9C560.1 292.8 561.1 293.0 561.0 293.6C561.0 294.1 560.5 294.0 561.2 295.0C562.0 296.1 563.4 299.5 565.3 299.8C567.3 300.2 571.8 297.8 573.2 297.2C574.6 296.5 573.5 296.6 573.7 295.8C573.9 295.0 575.5 293.4 574.6 292.2C573.8 290.9 570.8 288.5 568.6 288.4ZM582.7 304.9C581.8 304.3 581.6 304.0 580.4 304.7C579.1 305.4 576.3 308.0 575.3 309.1C574.3 310.2 573.7 310.4 574.3 311.4C574.9 312.4 577.2 314.8 578.7 315.2C580.1 315.5 582.0 314.4 583.1 313.5C584.2 312.5 584.7 310.3 585.1 309.5C585.5 308.7 586.2 309.2 585.8 308.4C585.4 307.7 583.6 305.5 582.7 304.9ZM519.9 352.7C518.7 352.2 519.0 352.4 518.7 353.7C518.3 355.0 517.9 359.2 517.9 360.4C517.9 361.6 517.6 360.9 518.6 360.9C519.6 360.8 522.7 360.6 523.9 360.1C525.2 359.6 525.5 358.4 525.9 357.8C526.2 357.1 526.9 357.2 526.0 356.3C525.0 355.5 521.1 353.1 519.9 352.7ZM577.1 267.4C575.5 267.6 575.5 268.8 575.1 269.3C574.6 269.9 573.9 270.4 574.4 270.7C574.9 271.0 576.4 270.5 577.9 270.9C579.4 271.4 581.5 273.4 583.2 273.3C584.8 273.1 587.0 270.8 587.8 270.1C588.6 269.4 588.3 269.5 587.8 269.2C587.3 268.9 586.7 268.5 584.9 268.2C583.1 267.9 578.8 267.2 577.1 267.4ZM716.7 294.9C714.7 295.5 716.2 294.4 716.1 295.2C716.0 296.1 716.1 298.7 716.1 299.8C716.2 300.9 714.8 301.4 716.5 301.8C718.1 302.2 724.4 302.2 726.2 302.2C728.1 302.1 727.2 302.7 727.5 301.6C727.9 300.5 728.2 297.2 728.3 295.6C728.3 293.9 729.7 291.7 727.8 291.6C725.9 291.5 718.6 294.3 716.7 294.9ZM566.2 320.8C564.5 320.4 565.6 318.8 564.6 319.5C563.5 320.2 560.5 323.9 559.8 325.1C559.0 326.3 560.0 326.2 560.1 326.8C560.2 327.4 558.6 328.3 560.4 328.5C562.3 328.7 568.5 328.5 571.0 327.8C573.6 327.0 575.1 325.0 575.8 324.0C576.4 323.0 575.1 322.2 575.0 321.8C574.8 321.5 576.1 321.9 574.6 321.7C573.2 321.6 567.9 321.2 566.2 320.8ZM635.5 240.0C635.1 240.5 634.9 240.2 635.6 242.0C636.2 243.8 638.6 249.4 639.2 250.9C639.9 252.3 639.2 250.9 639.7 250.8C640.1 250.6 641.5 251.1 642.0 250.1C642.6 249.1 642.7 245.8 642.8 244.7C643.0 243.7 644.0 244.9 643.2 243.9C642.3 243.0 639.1 239.7 637.8 239.0C636.5 238.4 635.8 239.5 635.5 240.0ZM571.0 259.9C570.2 259.6 571.3 258.5 569.8 259.0C568.3 259.5 563.1 262.1 561.9 262.9C560.6 263.8 561.4 262.8 562.4 264.1C563.4 265.3 566.6 269.3 567.8 270.3C569.0 271.3 568.3 270.7 569.6 269.8C570.9 269.0 574.5 266.4 575.5 265.1C576.4 263.8 575.6 263.0 575.5 262.3C575.4 261.5 575.4 260.7 574.7 260.3C573.9 259.9 571.8 260.1 571.0 259.9ZM577.6 325.2C576.1 324.9 576.9 325.0 576.1 325.6C575.4 326.1 573.7 327.8 573.2 328.7C572.6 329.5 572.8 329.1 572.9 330.5C573.0 331.8 572.9 335.8 573.7 336.9C574.5 338.0 576.7 337.3 577.6 337.3C578.5 337.3 577.7 338.1 579.1 337.0C580.4 335.9 584.5 332.1 585.7 330.8C586.9 329.4 586.3 329.4 586.3 329.0C586.2 328.5 586.7 328.5 585.2 327.9C583.8 327.2 579.2 325.6 577.6 325.2ZM715.5 291.2C714.3 292.9 714.5 291.9 714.5 292.1C714.6 292.3 713.5 292.9 715.7 292.4C718.0 292.0 726.0 290.1 728.0 289.4C730.0 288.7 727.9 289.5 727.9 288.3C728.0 287.1 728.2 283.3 728.0 282.1C727.9 281.0 728.4 281.3 727.3 281.3C726.1 281.3 723.3 280.4 721.3 282.1C719.3 283.7 716.6 289.6 715.5 291.2ZM655.4 434.3C656.4 434.3 658.0 433.8 659.0 433.0C659.9 432.3 661.4 431.2 661.0 429.8C660.7 428.5 657.7 425.7 657.0 424.7C656.4 423.7 657.5 424.0 657.1 424.0C656.6 423.9 654.8 424.2 654.2 424.4C653.7 424.6 654.1 424.1 653.8 425.2C653.5 426.3 652.6 429.6 652.5 431.0C652.3 432.4 652.3 432.9 652.8 433.4C653.2 434.0 654.3 434.4 655.4 434.3ZM653.5 408.4C652.9 406.6 653.5 408.4 653.0 408.5C652.5 408.5 651.4 408.0 650.7 408.9C649.9 409.9 648.1 412.1 648.4 414.2C648.7 416.4 651.7 420.5 652.5 421.7C653.2 422.9 652.6 421.6 653.2 421.6C653.7 421.6 655.4 421.9 655.9 421.6C656.4 421.2 656.7 421.8 656.3 419.6C655.9 417.4 654.0 410.3 653.5 408.4ZM646.6 276.5C645.1 277.8 646.1 278.2 646.1 278.5C646.2 278.9 645.4 278.3 646.9 278.4C648.4 278.6 653.4 279.3 655.0 279.4C656.5 279.5 655.7 279.6 656.2 279.1C656.6 278.6 657.7 277.8 657.6 276.5C657.5 275.1 656.0 272.0 655.6 271.1C655.1 270.1 656.5 269.7 655.0 270.6C653.5 271.5 648.1 275.1 646.6 276.5ZM643.3 432.8C643.2 433.2 642.7 434.0 643.1 434.4C643.5 434.8 644.7 435.0 645.7 435.1C646.8 435.2 648.4 434.9 649.3 435.0C650.2 435.0 650.8 435.5 651.0 435.3C651.2 435.1 651.5 434.4 650.6 433.8C649.6 433.1 646.4 431.8 645.3 431.5C644.2 431.1 644.3 431.7 644.0 431.9C643.6 432.1 643.5 432.3 643.3 432.8ZM520.5 323.3C520.5 325.2 520.7 325.2 521.3 325.4C521.9 325.6 522.4 325.5 524.1 324.6C525.9 323.6 530.6 320.8 531.6 319.7C532.7 318.7 531.1 319.3 530.6 318.3C530.0 317.2 529.2 314.3 528.4 313.3C527.6 312.2 527.0 311.9 525.8 312.1C524.6 312.2 521.9 312.3 521.0 314.1C520.2 316.0 520.4 321.4 520.5 323.3ZM629.3 234.6C628.3 234.3 628.8 235.5 628.6 235.8C628.3 236.1 626.9 235.8 627.6 236.2C628.3 236.6 631.4 238.1 632.7 238.4C633.9 238.8 634.8 238.5 635.0 238.3C635.3 238.1 635.4 237.9 634.4 237.3C633.5 236.7 630.3 234.8 629.3 234.6ZM621.2 321.3C621.6 319.7 620.6 320.1 620.3 319.9C620.0 319.6 621.5 319.7 619.4 319.9C617.2 320.1 610.4 319.6 607.4 320.9C604.4 322.2 602.7 326.5 601.5 327.9C600.3 329.3 600.1 328.2 600.4 329.2C600.6 330.2 602.4 332.9 603.1 333.7C603.8 334.4 602.5 334.2 604.8 333.8C607.1 333.4 614.7 332.1 616.9 331.4C619.1 330.6 617.4 331.0 618.1 329.3C618.8 327.6 620.8 322.8 621.2 321.3ZM671.6 269.0C670.2 269.2 670.7 269.1 670.3 270.1C669.9 271.0 669.1 273.8 669.1 274.8C669.1 275.8 669.5 275.8 670.2 276.1C670.9 276.3 671.8 277.0 673.3 276.5C674.8 275.9 678.2 273.9 679.3 272.9C680.4 271.9 680.0 271.3 679.9 270.7C679.8 270.0 680.2 269.4 678.8 269.1C677.4 268.9 673.0 268.9 671.6 269.0ZM653.7 224.1C652.5 224.2 652.9 223.4 653.1 224.1C653.3 224.8 653.7 227.3 654.8 228.3C656.0 229.4 658.6 229.9 660.0 230.2C661.4 230.4 662.6 230.4 663.3 229.8C664.0 229.1 664.5 227.0 664.3 226.2C664.2 225.5 663.1 225.7 662.6 225.2C662.0 224.8 662.3 223.8 660.8 223.6C659.4 223.4 655.0 224.0 653.7 224.1ZM629.9 282.9C627.7 283.9 624.7 288.9 623.2 290.3C621.8 291.6 621.5 290.6 621.4 291.0C621.3 291.3 622.2 292.0 622.8 292.4C623.4 292.8 624.0 293.0 625.1 293.2C626.2 293.4 627.4 294.9 629.3 293.6C631.2 292.4 635.1 287.3 636.4 285.8C637.7 284.3 637.3 284.9 637.3 284.6C637.3 284.4 637.7 284.8 636.4 284.5C635.2 284.2 632.1 282.0 629.9 282.9ZM695.3 328.0C694.4 327.3 697.2 326.0 694.2 327.4C691.2 328.8 680.3 334.5 677.4 336.3C674.6 338.0 676.2 336.8 676.9 338.0C677.5 339.3 680.5 342.6 681.3 343.7C682.0 344.9 680.1 345.3 681.4 345.1C682.7 344.9 686.0 344.5 689.0 342.6C692.0 340.6 697.6 335.4 699.3 333.5C701.1 331.6 700.2 332.0 699.6 331.1C698.9 330.2 696.2 328.6 695.3 328.0ZM530.2 275.9C530.2 276.6 530.4 276.7 530.8 277.4C531.2 278.2 531.8 279.9 532.5 280.5C533.3 281.1 533.5 281.9 535.2 280.8C536.9 279.8 541.3 275.4 542.7 274.1C544.0 272.7 543.3 273.2 543.0 272.6C542.8 271.9 542.7 270.7 541.4 270.3C540.0 269.9 536.5 269.6 534.7 270.1C532.9 270.6 531.5 272.6 530.7 273.5C530.0 274.5 530.1 275.3 530.2 275.9ZM723.1 273.7C722.5 274.2 723.8 274.6 723.8 274.8C723.9 275.0 722.9 274.6 723.4 274.7C723.9 274.7 726.1 275.2 726.9 275.2C727.7 275.1 727.8 274.8 728.0 274.4C728.2 274.0 728.2 273.0 728.1 272.6C727.9 272.1 728.0 271.3 727.2 271.5C726.3 271.7 723.6 273.1 723.1 273.7ZM721.3 279.2C721.6 279.6 722.6 280.7 723.0 280.8C723.4 280.9 723.4 280.0 723.7 279.8C724.0 279.5 724.7 279.4 724.7 279.2C724.7 279.0 724.4 278.6 723.8 278.6C723.3 278.5 722.0 278.7 721.6 278.8C721.2 279.0 721.1 278.9 721.3 279.2ZM628.5 249.4C628.2 249.7 627.4 251.4 627.8 251.8C628.2 252.2 630.2 252.1 630.8 251.9C631.3 251.8 630.8 251.3 630.9 251.1C631.0 251.0 631.6 251.1 631.4 250.9C631.3 250.7 630.5 250.4 630.0 250.1C629.5 249.9 628.9 249.2 628.5 249.4ZM599.4 315.1C597.7 315.5 595.2 316.3 594.1 317.9C592.9 319.6 592.7 323.5 592.5 325.1C592.3 326.7 591.9 327.4 592.8 327.7C593.7 327.9 596.1 328.1 598.2 326.9C600.2 325.6 604.0 321.5 605.1 320.3C606.3 319.0 605.2 320.0 605.0 319.2C604.8 318.4 605.1 316.2 604.1 315.5C603.2 314.8 601.1 314.7 599.4 315.1ZM706.6 258.4C705.2 258.9 703.8 260.4 703.7 261.9C703.5 263.5 705.1 266.7 705.7 267.7C706.2 268.6 706.1 267.6 707.0 267.7C707.9 267.7 710.0 268.4 711.0 268.1C712.0 267.8 712.7 267.4 712.8 266.1C712.9 264.7 711.9 261.2 711.7 260.0C711.5 258.8 712.6 259.1 711.8 258.8C710.9 258.5 708.0 257.9 706.6 258.4ZM625.4 295.9C623.9 296.5 621.3 299.0 620.6 300.1C619.8 301.1 620.4 301.0 620.8 302.1C621.2 303.3 621.6 306.5 622.9 306.8C624.1 307.1 626.6 304.9 628.3 303.7C630.0 302.5 632.4 300.5 633.1 299.6C633.8 298.8 632.9 299.0 632.3 298.4C631.8 297.8 631.0 296.5 629.9 296.1C628.7 295.6 627.0 295.2 625.4 295.9ZM717.4 319.2C719.0 317.5 718.3 318.0 718.2 317.8C718.2 317.7 720.3 318.3 717.1 318.5C713.9 318.7 702.2 318.7 699.2 318.9C696.2 319.2 699.5 319.1 699.1 320.2C698.7 321.3 695.9 323.7 696.6 325.4C697.2 327.2 701.4 329.8 702.8 330.7C704.3 331.5 704.2 331.0 705.3 330.5C706.3 330.1 707.1 329.9 709.1 328.0C711.2 326.1 715.9 320.9 717.4 319.2ZM583.6 244.3C583.2 245.0 583.9 244.9 584.1 245.1C584.3 245.3 584.2 245.9 584.9 245.5C585.5 245.1 587.3 243.3 588.0 242.7C588.6 242.1 589.0 242.2 588.8 241.8C588.5 241.5 587.2 240.2 586.3 240.7C585.5 241.1 583.9 243.5 583.6 244.3ZM620.1 239.1C619.4 239.2 619.8 239.7 619.8 239.9C619.7 240.2 619.4 239.8 619.9 240.7C620.5 241.5 621.9 243.9 623.1 245.0C624.3 246.2 626.2 247.4 627.1 247.7C627.9 248.0 627.9 247.4 628.3 247.1C628.6 246.7 629.9 247.0 629.3 245.7C628.6 244.5 625.6 240.5 624.1 239.4C622.6 238.3 620.8 239.0 620.1 239.1ZM681.4 353.2C681.9 353.7 681.5 354.6 682.4 353.6C683.3 352.5 686.3 348.0 687.0 346.9C687.6 345.7 687.2 346.6 686.3 346.6C685.4 346.7 683.0 346.7 681.7 347.1C680.5 347.5 679.4 348.3 679.0 348.9C678.7 349.4 679.0 349.8 679.4 350.5C679.8 351.2 680.9 352.7 681.4 353.2ZM518.6 363.2C517.9 363.5 518.5 363.8 518.5 364.7C518.6 365.7 518.0 368.5 518.9 369.1C519.7 369.8 522.9 369.0 523.7 368.7C524.6 368.3 523.8 367.6 524.0 367.1C524.2 366.6 525.1 366.4 525.0 365.7C524.8 365.1 524.0 363.7 522.9 363.3C521.9 362.9 519.4 363.0 518.6 363.2ZM580.5 235.6C579.9 236.4 579.8 236.4 579.7 236.6C579.5 236.9 578.5 237.0 579.7 237.2C580.9 237.3 584.9 238.0 586.7 237.5C588.5 237.0 589.5 235.0 590.2 234.3C590.9 233.5 591.0 233.5 590.9 233.1C590.8 232.7 590.8 231.9 589.5 231.7C588.3 231.5 584.9 231.4 583.4 232.0C581.9 232.7 581.1 234.8 580.5 235.6ZM522.2 288.6C520.5 289.2 521.5 288.2 521.8 288.8C522.0 289.4 523.6 290.9 523.7 292.3C523.9 293.6 522.6 296.0 522.6 296.8C522.7 297.7 523.4 297.4 524.1 297.5C524.9 297.6 525.8 299.0 527.2 297.5C528.6 295.9 531.4 289.9 532.4 288.2C533.4 286.5 533.0 287.9 533.0 287.4C532.9 287.0 533.8 285.4 532.0 285.6C530.2 285.8 523.9 288.1 522.2 288.6ZM644.7 281.1C642.3 281.4 640.2 282.3 639.5 283.1C638.7 283.9 639.1 284.6 640.3 285.9C641.5 287.1 644.8 290.0 646.6 290.7C648.3 291.3 649.4 290.8 650.9 289.7C652.5 288.5 655.1 284.9 655.8 283.8C656.5 282.7 655.5 283.4 655.1 282.9C654.8 282.4 655.5 281.3 653.8 281.0C652.1 280.7 647.1 280.7 644.7 281.1ZM596.3 309.7C595.9 308.7 596.2 307.9 595.0 307.9C593.7 307.8 590.1 308.9 588.8 309.6C587.5 310.2 587.4 311.1 587.2 311.8C587.0 312.5 587.4 313.3 587.6 313.7C587.7 314.1 587.2 314.0 588.2 314.3C589.2 314.6 591.9 315.6 593.5 315.5C595.0 315.4 596.8 314.7 597.2 313.7C597.7 312.7 596.6 310.7 596.3 309.7ZM694.8 270.7C693.7 270.7 693.9 270.6 693.4 271.7C692.9 272.8 692.0 276.4 691.7 277.5C691.5 278.5 691.3 277.6 691.9 277.8C692.5 278.0 693.9 279.1 695.3 278.8C696.7 278.4 699.5 276.9 700.2 275.8C700.9 274.6 700.4 272.5 699.5 271.7C698.6 270.8 695.8 270.7 694.8 270.7ZM616.8 274.5C615.3 274.9 614.0 275.6 613.4 276.2C612.7 276.9 613.1 277.8 613.0 278.4C612.9 279.0 612.2 279.6 612.9 280.0C613.6 280.4 615.4 280.9 617.1 280.6C618.8 280.4 621.9 279.3 622.9 278.7C623.9 278.2 623.2 278.0 623.1 277.2C622.9 276.5 623.2 274.6 622.2 274.1C621.1 273.6 618.3 274.2 616.8 274.5ZM667.2 248.7C666.6 249.5 665.6 249.2 666.5 250.0C667.4 250.7 671.1 253.0 672.3 253.4C673.4 253.8 672.8 253.0 673.4 252.3C674.1 251.7 676.0 250.5 676.4 249.8C676.8 249.0 677.1 248.6 675.9 248.0C674.8 247.3 671.0 245.5 669.5 245.6C668.1 245.8 667.7 248.0 667.2 248.7ZM637.4 226.9C635.8 227.5 632.6 228.5 631.6 229.1C630.6 229.8 630.9 230.4 631.2 230.9C631.5 231.4 632.2 231.4 633.3 231.9C634.4 232.4 636.7 234.0 637.9 234.0C639.1 234.0 640.0 233.0 640.8 231.8C641.5 230.7 642.6 228.1 642.7 227.1C642.7 226.1 642.0 225.9 641.1 225.9C640.2 225.8 639.0 226.4 637.4 226.9ZM666.6 298.7C667.6 296.6 667.1 296.2 666.7 295.8C666.3 295.4 666.8 295.3 664.0 296.3C661.2 297.3 652.5 300.5 650.0 301.6C647.4 302.8 649.2 302.8 648.9 303.4C648.5 304.0 648.0 304.8 647.9 305.2C647.8 305.5 647.3 305.1 648.4 305.7C649.6 306.3 652.8 308.3 654.8 308.8C656.9 309.2 658.8 310.0 660.8 308.3C662.7 306.6 665.6 300.8 666.6 298.7ZM597.5 280.0C597.2 279.6 597.6 279.0 596.4 279.0C595.2 279.0 592.1 279.0 590.3 280.0C588.5 281.0 586.4 284.2 585.6 285.2C584.8 286.2 585.0 285.8 585.6 286.1C586.2 286.4 587.0 287.8 589.1 287.0C591.1 286.3 596.5 282.7 598.0 281.6C599.4 280.4 597.8 280.4 597.5 280.0ZM680.4 276.1C678.2 276.0 674.9 277.3 673.9 278.1C672.9 278.9 673.1 280.0 674.6 280.8C676.1 281.5 681.0 282.6 683.0 282.6C685.0 282.7 685.9 281.6 686.5 280.9C687.1 280.2 687.7 279.2 686.7 278.4C685.7 277.6 682.5 276.1 680.4 276.1ZM615.3 232.1C613.4 232.1 614.0 233.3 613.7 233.6C613.5 233.9 613.3 233.3 614.0 233.9C614.6 234.5 616.1 236.7 617.6 237.3C619.0 237.9 621.5 237.8 622.5 237.4C623.6 237.1 623.5 235.9 623.9 235.2C624.2 234.6 626.2 234.0 624.7 233.5C623.3 233.0 617.1 232.1 615.3 232.1ZM706.6 269.6C705.0 269.7 703.0 269.9 702.3 270.9C701.6 271.9 701.6 274.6 702.4 275.6C703.2 276.6 705.5 276.9 707.3 277.0C709.1 277.0 712.3 276.4 713.2 275.9C714.2 275.3 713.2 274.6 713.0 273.7C712.8 272.7 712.9 270.9 711.8 270.3C710.8 269.6 708.2 269.5 706.6 269.6ZM714.7 258.8C713.3 258.3 713.6 258.6 713.7 259.7C713.8 260.7 713.8 263.9 715.2 264.9C716.5 265.9 720.5 265.6 721.7 265.6C722.9 265.6 722.2 265.1 722.5 264.8C722.7 264.6 723.3 264.5 723.3 264.1C723.3 263.7 723.8 263.2 722.4 262.4C721.0 261.5 716.2 259.2 714.7 258.8ZM570.7 357.8C568.2 360.1 569.5 359.7 569.5 360.4C569.5 361.1 570.4 361.4 570.7 361.9C571.0 362.5 571.2 363.6 571.5 363.8C571.8 364.0 567.8 364.3 572.6 363.3C577.4 362.3 595.4 359.2 600.2 357.9C604.9 356.6 600.7 356.1 601.1 355.5C601.5 355.0 602.4 355.2 602.4 354.7C602.4 354.2 602.1 354.1 601.0 352.7C599.8 351.3 598.3 347.0 595.5 346.1C592.8 345.1 586.3 346.9 584.4 347.0C582.5 347.2 586.4 345.2 584.1 347.0C581.9 348.8 573.1 355.6 570.7 357.8ZM604.4 220.5C602.8 220.8 602.6 221.0 602.3 221.4C602.0 221.7 601.8 222.1 602.5 222.8C603.3 223.4 605.6 225.3 606.6 225.5C607.6 225.8 607.5 224.9 608.5 224.2C609.6 223.4 612.4 221.8 613.0 221.1C613.5 220.4 613.1 219.9 611.7 219.8C610.3 219.7 606.0 220.3 604.4 220.5ZM546.5 394.4C546.4 395.4 545.7 394.0 547.7 394.4C549.6 394.8 555.7 397.5 558.5 397.1C561.2 396.7 562.7 393.2 564.0 392.1C565.2 391.0 565.4 391.0 565.9 390.5C566.4 390.0 567.2 389.6 567.0 389.1C566.8 388.5 567.6 387.2 564.7 387.2C561.9 387.2 552.4 388.7 549.6 389.0C546.9 389.2 548.7 387.9 548.2 388.8C547.7 389.7 546.6 393.5 546.5 394.4ZM606.3 237.8C605.4 238.2 606.0 238.7 607.1 239.2C608.2 239.8 611.3 240.9 612.9 240.8C614.4 240.7 615.9 238.8 616.3 238.4C616.8 238.0 616.2 238.7 615.5 238.4C614.9 238.1 614.0 236.6 612.5 236.5C610.9 236.4 607.2 237.3 606.3 237.8ZM534.2 320.5C532.4 321.1 528.7 323.4 527.5 324.5C526.4 325.6 527.6 326.5 527.5 327.1C527.5 327.6 526.7 326.4 527.3 327.5C527.9 328.7 530.2 332.9 531.3 334.1C532.3 335.2 532.8 334.6 533.7 334.6C534.6 334.6 535.2 335.6 536.6 334.1C538.0 332.5 541.3 326.7 542.0 325.0C542.7 323.3 541.3 324.6 540.7 323.9C540.1 323.1 539.6 321.2 538.5 320.7C537.4 320.1 536.1 319.9 534.2 320.5ZM649.7 266.9C649.3 266.6 650.4 266.9 649.1 267.1C647.8 267.3 643.4 267.8 642.0 268.3C640.6 268.9 640.9 269.9 640.6 270.5C640.3 271.1 639.8 270.8 640.2 271.7C640.6 272.5 642.3 274.8 643.0 275.5C643.7 276.2 642.8 276.9 644.3 275.8C645.9 274.8 650.9 270.3 652.2 269.3C653.4 268.2 652.3 269.7 651.9 269.3C651.5 269.0 650.2 267.3 649.7 266.9ZM562.9 246.2C562.1 247.3 562.4 247.4 562.4 247.6C562.5 247.7 561.8 246.7 563.2 246.9C564.6 247.0 568.5 248.9 570.6 248.5C572.6 248.1 574.3 246.1 575.4 244.5C576.6 242.9 577.3 240.0 577.4 238.9C577.4 237.7 576.6 237.7 575.7 237.6C574.8 237.5 573.1 237.8 571.7 238.3C570.4 238.8 568.9 239.4 567.4 240.7C565.9 242.0 563.8 245.1 562.9 246.2ZM675.5 254.4C674.9 255.3 674.8 254.5 674.8 254.8C674.9 255.1 674.4 256.4 676.0 256.4C677.6 256.4 682.8 255.2 684.5 254.9C686.2 254.6 686.1 255.3 686.3 254.5C686.4 253.8 686.3 251.5 685.4 250.4C684.5 249.3 682.1 247.9 681.0 247.8C679.9 247.7 679.7 248.5 678.8 249.6C677.9 250.7 676.2 253.5 675.5 254.4ZM586.0 297.3C585.3 298.5 586.0 299.2 586.1 299.6C586.2 300.0 584.8 300.0 586.5 299.6C588.3 299.2 594.7 298.0 596.6 297.4C598.5 296.9 597.5 296.8 597.8 296.3C598.0 295.8 598.0 294.8 597.9 294.4C597.9 294.0 598.7 294.3 597.3 293.9C596.0 293.5 591.9 291.4 590.0 292.0C588.1 292.6 586.6 296.0 586.0 297.3ZM629.2 409.8C628.3 408.3 628.6 408.7 628.6 408.5C628.5 408.3 629.3 407.8 628.8 408.5C628.4 409.3 626.5 412.3 625.9 413.0C625.2 413.6 624.2 410.9 624.7 412.5C625.2 414.1 627.9 420.4 628.8 422.4C629.7 424.3 629.8 423.9 630.2 424.1C630.5 424.3 630.2 424.8 630.8 423.7C631.4 422.7 634.1 420.1 633.8 417.7C633.5 415.4 630.1 411.4 629.2 409.8ZM667.3 226.5C666.3 225.7 665.0 226.8 664.7 227.5C664.3 228.1 664.3 229.2 665.2 230.1C666.1 231.0 669.2 232.7 670.1 233.0C671.0 233.4 670.5 232.7 670.6 232.5C670.7 232.3 671.5 232.9 670.9 231.9C670.4 230.9 668.3 227.2 667.3 226.5ZM682.6 241.6C681.5 241.3 682.0 243.5 682.0 244.5C682.0 245.4 682.0 246.3 682.5 247.0C683.0 247.7 684.0 248.6 685.0 248.7C686.0 248.9 688.0 248.4 688.6 248.0C689.2 247.6 689.4 247.3 688.4 246.3C687.4 245.2 683.7 241.9 682.6 241.6ZM693.6 258.3C692.7 259.0 693.2 258.5 693.2 258.7C693.2 259.0 692.4 259.4 693.6 260.0C694.8 260.7 698.8 262.6 700.2 262.8C701.6 262.9 701.2 261.6 701.9 260.9C702.5 260.2 703.8 259.3 704.2 258.6C704.5 257.8 704.6 257.2 703.9 256.4C703.3 255.6 701.3 254.2 700.4 253.8C699.5 253.5 699.8 253.5 698.6 254.2C697.5 255.0 694.5 257.5 693.6 258.3ZM628.1 261.2C627.0 262.2 627.0 264.1 627.5 264.7C627.9 265.3 629.7 265.2 630.8 264.8C631.9 264.4 633.2 263.3 633.8 262.3C634.5 261.3 634.4 259.5 634.5 258.9C634.6 258.4 635.3 258.5 634.2 258.9C633.2 259.2 629.3 260.2 628.1 261.2ZM591.5 329.4C590.4 329.2 592.4 327.3 590.9 328.9C589.4 330.4 583.7 336.6 582.2 338.6C580.7 340.6 581.3 340.2 581.8 341.0C582.2 341.7 582.5 342.9 584.8 343.1C587.1 343.3 593.0 343.6 595.7 342.2C598.3 340.9 599.8 336.4 600.7 335.1C601.5 333.7 601.2 335.0 600.7 334.2C600.2 333.3 599.1 330.8 597.6 330.0C596.0 329.2 592.6 329.6 591.5 329.4ZM617.3 409.7C616.0 409.1 615.7 410.6 615.3 410.6C614.8 410.6 614.6 409.1 614.5 409.6C614.5 410.1 613.5 412.2 614.9 413.9C616.4 415.6 621.6 418.6 623.2 419.6C624.8 420.6 624.3 420.1 624.6 420.0C624.9 419.9 625.3 420.1 625.0 419.2C624.8 418.2 624.4 416.0 623.1 414.4C621.9 412.9 618.6 410.4 617.3 409.7ZM617.6 391.3C617.0 391.2 616.1 391.3 615.6 391.5C615.2 391.7 614.9 391.3 615.0 392.5C615.1 393.7 615.9 396.1 616.4 398.6C616.8 401.1 617.2 406.0 617.6 407.5C618.0 409.0 617.7 407.1 618.8 407.5C619.9 408.0 622.6 410.3 624.2 410.1C625.7 409.9 627.5 407.5 628.2 406.3C628.9 405.1 629.4 404.4 628.2 402.7C627.0 401.1 622.4 398.1 620.9 396.3C619.4 394.5 619.7 392.9 619.2 392.1C618.6 391.2 618.2 391.4 617.6 391.3ZM543.4 259.1C541.7 260.4 537.6 265.7 536.8 267.1C535.9 268.4 536.9 267.1 538.3 267.3C539.8 267.5 543.9 268.6 545.7 268.1C547.5 267.7 548.7 265.5 549.3 264.8C549.9 264.1 549.6 264.7 549.2 263.7C548.9 262.8 548.2 259.9 547.2 259.1C546.3 258.3 545.1 257.7 543.4 259.1ZM639.0 287.9C637.8 287.5 638.1 286.7 636.9 287.8C635.7 289.0 632.6 293.6 631.7 294.9C630.9 296.2 631.0 294.9 631.5 295.5C632.1 296.0 634.2 297.8 634.9 298.3C635.7 298.8 634.5 299.5 636.1 298.5C637.7 297.5 643.1 293.6 644.5 292.3C645.8 290.9 645.3 291.0 644.4 290.3C643.5 289.5 640.3 288.3 639.0 287.9ZM648.4 388.8C647.6 388.8 647.1 389.0 646.7 390.0C646.4 391.0 645.4 392.3 646.3 394.7C647.1 397.1 650.4 402.5 651.8 404.4C653.1 406.3 653.1 406.1 654.6 406.2C656.1 406.3 659.7 405.4 660.7 404.8C661.8 404.1 661.3 403.2 661.0 402.3C660.8 401.4 659.7 400.8 659.2 399.5C658.6 398.2 659.2 396.0 657.9 394.4C656.6 392.8 653.0 390.7 651.4 389.7C649.8 388.8 649.2 388.7 648.4 388.8ZM665.9 379.1C663.7 380.7 656.7 386.8 654.9 388.6C653.1 390.4 654.4 389.2 655.1 389.8C655.9 390.5 657.6 392.4 659.5 392.5C661.4 392.7 665.0 392.6 666.4 390.5C667.9 388.3 667.9 381.6 668.2 379.7C668.5 377.9 668.6 379.5 668.2 379.4C667.8 379.3 668.1 377.6 665.9 379.1ZM614.4 221.0C612.7 221.5 611.3 223.8 611.5 224.7C611.7 225.7 614.1 226.7 615.8 226.6C617.4 226.5 620.3 224.8 621.4 224.1C622.5 223.5 622.1 223.3 622.2 222.8C622.2 222.4 622.8 221.8 621.5 221.5C620.3 221.2 616.1 220.4 614.4 221.0ZM610.9 281.2C609.4 281.6 606.1 282.9 605.1 284.0C604.2 285.2 605.4 287.4 605.4 288.3C605.4 289.1 603.9 289.1 605.2 289.3C606.4 289.5 611.7 289.6 613.1 289.6C614.4 289.6 612.9 290.5 613.3 289.5C613.7 288.5 615.2 284.7 615.4 283.5C615.6 282.2 615.2 282.2 614.5 281.8C613.7 281.4 612.5 280.8 610.9 281.2ZM615.2 240.9C615.0 241.3 615.4 242.3 616.0 242.9C616.5 243.5 618.1 244.3 618.6 244.6C619.1 244.9 618.6 245.0 618.9 244.7C619.1 244.3 620.4 243.1 620.1 242.4C619.9 241.8 618.3 241.0 617.4 240.8C616.6 240.5 615.5 240.6 615.2 240.9ZM674.7 239.1C673.1 239.1 670.9 241.3 670.0 241.7C669.1 242.1 669.6 241.2 669.5 241.4C669.4 241.7 667.7 242.4 669.2 243.4C670.7 244.4 676.9 246.9 678.5 247.6C680.1 248.3 678.8 247.8 679.0 247.5C679.2 247.3 679.6 247.0 679.6 246.1C679.7 245.1 680.2 243.0 679.4 241.9C678.6 240.7 676.3 239.1 674.7 239.1ZM645.1 398.1C644.1 396.7 644.4 397.8 643.7 397.9C643.0 398.0 641.6 397.9 640.8 398.6C640.0 399.3 638.5 400.0 638.9 402.1C639.2 404.2 641.9 409.6 642.8 411.1C643.8 412.7 643.8 411.6 644.5 411.5C645.1 411.4 645.7 411.3 646.6 410.5C647.4 409.7 649.8 408.8 649.6 406.8C649.3 404.7 646.1 399.6 645.1 398.1ZM660.5 257.3C658.5 257.3 657.5 259.3 657.1 259.9C656.6 260.6 656.4 260.3 657.8 261.0C659.3 261.8 664.2 263.9 665.8 264.3C667.3 264.8 666.3 264.4 667.1 263.9C667.9 263.4 670.1 262.3 670.5 261.5C670.9 260.8 671.3 260.2 669.6 259.4C668.0 258.7 662.6 257.2 660.5 257.3ZM683.9 264.5C683.0 265.0 682.0 266.9 681.3 267.6C680.7 268.3 679.7 268.2 679.8 268.6C679.9 268.9 680.1 269.8 682.0 269.7C683.8 269.6 689.5 268.5 690.9 268.0C692.4 267.6 691.2 267.7 690.4 267.1C689.7 266.5 687.8 265.0 686.7 264.6C685.6 264.2 684.8 264.0 683.9 264.5ZM640.1 236.1C639.5 236.6 639.2 235.7 640.0 236.1C640.7 236.6 642.9 238.8 644.4 238.8C645.9 238.7 648.0 236.5 648.8 235.8C649.6 235.1 649.1 235.0 649.3 234.7C649.4 234.3 649.7 234.0 649.6 233.8C649.4 233.6 649.4 233.6 648.4 233.5C647.3 233.3 644.7 232.5 643.4 233.0C642.0 233.4 640.6 235.5 640.1 236.1ZM569.4 273.0C568.1 273.2 568.5 273.3 568.3 273.6C568.2 273.9 567.8 273.5 568.3 274.8C568.8 276.1 570.8 280.2 571.3 281.4C571.9 282.5 570.9 281.8 571.6 281.7C572.3 281.5 573.9 281.5 575.5 280.4C577.0 279.4 580.3 276.2 581.1 275.2C581.8 274.1 580.7 274.5 579.9 274.0C579.1 273.6 577.9 272.6 576.2 272.4C574.4 272.2 570.7 272.8 569.4 273.0ZM630.6 270.5C629.0 270.8 625.4 272.1 624.6 273.4C623.8 274.7 625.3 277.3 625.8 278.2C626.3 279.1 626.4 279.4 627.6 278.7C628.7 277.9 631.6 275.0 632.6 273.9C633.7 272.7 634.1 272.1 633.7 271.6C633.4 271.0 632.1 270.2 630.6 270.5ZM690.0 296.0C690.2 296.6 688.1 297.2 691.2 296.6C694.2 295.9 705.0 293.0 708.1 292.0C711.2 291.1 709.6 291.3 709.7 291.0C709.9 290.7 709.7 291.2 709.0 290.3C708.4 289.3 707.9 285.7 705.9 285.2C704.0 284.7 700.0 285.8 697.3 287.1C694.7 288.4 691.3 291.7 690.1 293.2C688.8 294.6 689.8 295.4 690.0 296.0ZM552.8 339.7C551.7 341.3 552.8 340.2 553.2 340.8C553.7 341.4 554.3 343.1 555.6 343.2C556.9 343.3 558.9 342.0 561.2 341.3C563.5 340.5 567.9 339.5 569.6 338.6C571.3 337.7 571.5 337.1 571.6 336.0C571.6 334.9 570.4 332.9 570.0 332.0C569.5 331.2 570.5 331.0 568.8 330.8C567.1 330.6 562.6 329.5 559.9 330.9C557.2 332.4 553.9 338.0 552.8 339.7ZM616.3 228.2C615.4 228.8 616.4 228.4 617.6 229.0C618.7 229.5 621.7 231.2 623.1 231.5C624.5 231.8 625.2 231.3 625.7 230.9C626.3 230.4 626.9 229.7 626.4 228.8C625.9 227.9 624.6 225.5 622.9 225.4C621.2 225.3 617.2 227.6 616.3 228.2ZM548.5 256.7C548.5 257.5 548.8 257.2 549.2 258.0C549.6 258.9 550.3 261.1 550.9 261.7C551.6 262.4 552.4 262.1 553.1 262.1C553.7 262.1 554.3 262.8 555.0 261.9C555.7 260.9 556.6 258.2 557.4 256.4C558.2 254.6 559.4 252.3 559.8 251.0C560.2 249.8 559.7 249.6 559.6 249.0C559.5 248.5 559.5 248.0 559.3 247.6C559.2 247.3 559.3 246.7 558.7 247.0C558.1 247.2 556.5 248.6 555.6 249.0C554.7 249.4 554.6 248.5 553.4 249.3C552.3 250.0 549.7 252.1 548.8 253.3C548.0 254.6 548.4 256.0 548.5 256.7ZM574.8 299.6C572.8 299.8 567.9 301.0 566.5 301.7C565.1 302.4 566.3 303.1 566.2 303.7C566.0 304.3 565.0 304.4 565.6 305.2C566.2 306.1 568.7 308.4 569.9 308.9C571.1 309.3 571.2 309.0 572.8 308.0C574.3 307.0 578.2 304.0 579.2 302.8C580.1 301.6 579.2 301.2 578.4 300.7C577.7 300.2 576.8 299.5 574.8 299.6ZM630.0 316.2C627.8 315.3 627.1 316.8 626.1 317.2C625.0 317.5 624.5 316.5 623.6 318.6C622.7 320.6 621.1 327.4 620.6 329.4C620.1 331.4 619.8 330.2 620.4 330.6C621.1 331.0 621.0 332.9 624.3 331.7C627.6 330.6 637.8 325.2 640.3 323.8C642.9 322.3 639.9 323.2 639.8 323.0C639.6 322.8 641.0 323.7 639.3 322.6C637.7 321.5 632.2 317.2 630.0 316.2ZM627.1 236.9C626.2 236.5 626.0 237.9 625.7 238.2C625.4 238.6 624.9 238.1 625.5 239.1C626.0 240.1 628.1 243.1 628.9 244.1C629.7 245.0 629.6 245.1 630.2 244.9C630.9 244.8 632.6 243.9 632.8 243.1C633.0 242.3 632.4 241.4 631.4 240.3C630.5 239.3 628.1 237.2 627.1 236.9ZM575.4 282.4C573.8 282.0 572.6 282.4 571.6 283.1C570.7 283.7 570.0 285.4 569.8 286.2C569.5 287.1 569.0 287.7 570.1 288.4C571.2 289.1 573.9 290.6 576.1 290.4C578.4 290.2 582.4 288.0 583.5 287.3C584.7 286.6 583.5 286.7 583.1 286.3C582.8 286.0 582.7 285.7 581.5 285.0C580.2 284.4 577.0 282.7 575.4 282.4ZM647.1 240.0C646.2 240.8 645.7 240.7 646.0 241.2C646.3 241.7 647.9 242.8 649.1 242.9C650.3 243.1 651.9 242.6 653.2 242.1C654.5 241.6 656.6 240.7 656.8 240.0C657.1 239.2 655.6 238.1 654.7 237.5C653.7 237.0 652.5 236.3 651.3 236.7C650.0 237.2 648.0 239.3 647.1 240.0ZM563.7 305.6C561.8 305.9 557.1 309.7 555.8 310.4C554.4 311.2 555.3 309.8 555.4 310.3C555.5 310.7 555.1 312.4 556.3 313.1C557.5 313.9 561.4 314.6 562.8 314.8C564.1 315.1 563.5 315.7 564.5 314.7C565.4 313.7 567.9 310.0 568.4 309.0C568.8 308.0 568.1 309.2 567.3 308.6C566.5 308.0 565.6 305.3 563.7 305.6ZM638.2 365.7C636.7 367.7 638.0 367.2 638.1 367.7C638.2 368.1 638.0 367.7 638.8 368.4C639.6 369.1 639.7 371.6 643.1 371.6C646.4 371.6 655.9 369.2 658.9 368.2C661.9 367.2 660.8 367.2 661.1 365.6C661.5 364.0 661.2 360.0 661.0 358.8C660.8 357.7 662.1 359.1 659.9 358.6C657.7 358.1 650.1 356.4 647.9 355.9C645.8 355.5 648.7 354.3 647.1 356.0C645.4 357.6 639.7 363.8 638.2 365.7ZM642.2 418.7C641.7 419.5 641.3 418.3 641.7 419.8C642.1 421.4 643.8 426.4 644.8 428.2C645.9 430.0 646.9 430.2 647.8 430.5C648.7 430.9 649.8 430.6 650.3 430.4C650.8 430.2 650.5 430.8 650.7 429.5C650.8 428.1 652.0 424.6 651.1 422.3C650.2 420.0 646.4 416.8 645.3 415.7C644.3 414.5 645.5 414.8 645.0 415.3C644.4 415.8 642.8 417.9 642.2 418.7ZM668.3 268.9C667.9 267.8 667.5 267.7 666.1 268.0C664.6 268.4 660.8 270.3 659.6 271.0C658.3 271.6 658.4 270.9 658.4 271.7C658.4 272.6 659.1 275.4 659.5 276.1C659.9 276.9 659.4 276.4 660.8 276.2C662.1 276.0 666.5 275.4 667.8 275.1C669.1 274.7 668.4 275.2 668.5 274.2C668.6 273.1 668.7 269.9 668.3 268.9ZM593.0 231.9C592.9 232.4 592.7 233.1 593.7 233.6C594.7 234.1 597.5 235.0 598.8 234.8C600.2 234.5 601.3 232.7 601.7 232.0C602.0 231.3 602.2 230.9 601.0 230.6C599.7 230.4 595.5 230.5 594.2 230.7C592.8 230.9 593.0 231.4 593.0 231.9ZM538.4 281.9C537.1 283.4 537.6 283.6 537.6 284.2C537.7 284.8 536.7 284.7 538.8 285.5C540.9 286.2 548.0 288.6 550.1 288.8C552.2 289.0 551.1 288.1 551.5 286.7C552.0 285.4 552.7 282.1 552.7 280.7C552.7 279.2 552.4 278.8 551.7 278.0C551.0 277.1 549.3 276.0 548.3 275.5C547.4 275.1 547.6 274.1 545.9 275.1C544.3 276.2 539.8 280.4 538.4 281.9ZM659.2 420.7C658.1 421.0 659.1 420.8 659.1 421.1C659.2 421.3 659.2 421.2 659.4 422.3C659.6 423.4 660.0 426.8 660.6 427.8C661.1 428.8 662.0 428.9 662.8 428.2C663.6 427.6 664.6 425.3 665.3 423.9C665.9 422.6 666.4 420.9 666.5 420.1C666.7 419.3 667.3 419.0 666.0 419.1C664.8 419.2 660.3 420.4 659.2 420.7ZM696.5 284.1C696.7 284.5 697.0 285.3 698.5 285.2C699.9 285.1 703.8 284.1 705.2 283.3C706.6 282.6 706.5 281.1 706.6 280.7C706.8 280.3 707.6 280.9 706.1 281.1C704.6 281.2 699.2 281.4 697.7 281.7C696.3 281.9 697.4 282.2 697.2 282.6C697.0 283.0 696.3 283.7 696.5 284.1ZM611.7 308.9C613.3 309.4 619.1 308.1 620.5 307.6C621.9 307.1 620.5 307.0 620.0 306.1C619.6 305.2 618.3 302.8 617.8 302.3C617.4 301.7 618.7 302.4 617.4 302.7C616.2 303.0 611.5 303.8 610.4 304.1C609.2 304.3 610.6 303.6 610.8 304.4C611.0 305.2 610.1 308.3 611.7 308.9Z" stroke-width="0.78" stroke="#242424"/>
<path d="M521.7 286.5C522.0 287.6 523.5 290.7 523.2 293.1C523.0 295.4 520.5 297.9 520.3 300.4C520.0 302.8 521.7 305.5 521.7 307.7C521.7 309.9 520.6 311.4 520.3 313.6C519.9 315.8 519.8 318.4 519.5 320.9C519.3 323.3 519.1 325.7 518.8 328.2C518.6 330.7 518.1 334.2 518.1 336.0C518.1 337.7 518.9 336.4 518.8 338.8C518.7 341.2 517.7 346.6 517.3 350.5C517.0 354.4 516.5 358.3 516.6 362.2C516.7 366.1 517.1 370.5 518.1 373.9C519.0 377.3 520.3 380.0 522.5 382.7C524.7 385.4 527.3 387.8 531.2 390.0C535.1 392.2 540.8 394.4 545.9 395.9C551.0 397.3 556.4 397.8 562.0 398.8C567.6 399.8 574.2 400.6 579.6 401.7C584.9 402.8 590.6 404.4 594.2 405.4C597.8 406.4 597.6 406.2 601.0 407.8C604.5 409.3 610.6 412.1 614.7 414.6C618.8 417.1 622.5 420.3 625.7 422.8C628.9 425.3 631.1 427.6 633.9 429.7C636.6 431.7 639.3 434.0 642.1 435.1C644.8 436.3 647.6 436.7 650.3 436.5C653.0 436.3 656.0 435.6 658.5 433.8C661.0 432.0 663.6 428.8 665.3 425.6C667.0 422.4 668.4 420.1 668.8 414.6C669.1 409.2 667.5 398.5 667.6 393.0C667.7 387.4 668.1 385.1 669.1 381.2C670.0 377.3 671.5 373.4 673.5 369.5C675.4 365.6 678.1 361.7 680.8 357.8C683.5 353.9 686.6 349.5 689.6 346.1C692.5 342.7 695.2 340.0 698.3 337.3C701.5 334.6 705.7 332.5 708.6 330.0C711.5 327.5 713.7 324.6 715.9 322.3C718.1 320.1 720.1 318.7 721.8 316.5C723.5 314.3 725.1 312.1 726.2 309.2C727.3 306.2 727.9 302.6 728.4 298.9C728.8 295.3 729.0 290.9 729.1 287.2C729.2 283.6 729.0 280.1 728.8 277.0C728.6 273.8 728.6 270.6 727.6 268.2C726.7 265.7 725.4 264.0 723.2 262.3C721.0 260.6 715.9 258.7 714.5 257.9" stroke-width="0.85"/>
<path d="M699.0 267.6C698.8 268.0 698.3 268.4 697.6 268.5C696.9 268.6 695.9 268.5 694.9 268.3C694.0 268.1 692.8 267.6 691.8 267.1C690.9 266.6 689.8 265.9 689.1 265.2C688.4 264.5 687.8 263.8 687.5 263.1C687.2 262.5 687.2 261.9 687.4 261.4C687.6 261.0 688.2 260.7 688.9 260.5C689.6 260.4 690.5 260.5 691.5 260.7C692.5 261.0 693.6 261.4 694.6 261.9C695.6 262.4 696.6 263.2 697.3 263.8C698.0 264.5 698.7 265.3 698.9 265.9C699.2 266.5 699.3 267.2 699.0 267.6Z" stroke-width="0.5" fill="#111"/>
<path d="M571.1 256.2C571.3 254.5 578.8 250.8 582.3 248.4C585.8 246.1 588.9 243.5 592.1 242.1C595.4 240.7 598.6 240.1 601.9 240.1C605.1 240.1 608.4 240.8 611.6 242.1C614.9 243.4 618.5 246.1 621.4 247.9C624.3 249.8 626.5 252.1 629.2 253.3C632.0 254.5 638.0 254.3 638.0 255.3C638.0 256.2 632.0 257.6 629.2 259.2C626.5 260.8 624.0 263.2 621.4 265.0C618.8 266.9 616.5 269.1 613.6 270.4C610.7 271.7 607.1 272.8 603.8 272.9C600.6 272.9 597.0 272.2 594.1 270.9C591.1 269.6 588.4 267.0 586.2 265.0C584.1 263.1 583.9 260.6 581.4 259.2C578.8 257.7 571.0 258.0 571.1 256.2Z" stroke-width="1.3" fill="#fff"/>
<path d="M571.1 256.2C571.2 254.9 581.1 250.9 583.3 250.6C585.5 250.3 584.4 252.9 584.3 254.3C584.2 255.7 585.0 258.7 582.8 259.0C580.6 259.3 571.0 257.6 571.1 256.2Z" stroke-width="0.5" fill="#222"/>
<path d="M630.2 253.3C631.2 253.2 637.9 254.6 638.0 255.5C638.1 256.4 631.7 258.7 630.7 258.8C629.7 258.9 632.2 257.0 632.1 256.1C632.1 255.1 629.2 253.4 630.2 253.3Z" stroke-width="0.5" fill="#222"/>
<path d="M513.0 151.9C512.4 150.1 509.7 145.3 509.7 141.6C509.7 137.9 510.7 133.1 513.0 129.9C515.2 126.7 520.0 124.2 523.2 122.6C526.4 121.0 528.6 120.4 532.0 120.4C535.4 120.3 540.5 121.2 543.7 122.3C546.9 123.4 549.4 125.4 551.0 127.0C552.7 128.5 553.8 129.2 553.5 131.4C553.3 133.6 550.8 137.6 549.6 140.1C548.3 142.7 546.5 145.6 545.9 146.7M486.6 156.2C488.8 155.6 495.4 153.4 499.8 152.6C504.2 151.8 508.6 151.4 513.0 151.6C517.3 151.7 523.9 153.0 526.1 153.3M486.6 156.2C484.7 157.5 478.6 160.6 474.9 163.6C471.2 166.5 467.4 170.1 464.6 173.8C461.8 177.5 459.2 183.9 458.1 186.0M467.6 170.0C466.4 171.3 462.6 175.0 460.7 177.8C458.9 180.6 457.3 183.8 456.3 186.6C455.4 189.4 454.9 191.6 454.9 194.4C454.9 197.2 455.5 200.4 456.3 203.2C457.2 206.0 458.2 208.4 459.8 211.0C461.3 213.6 463.5 216.7 465.6 218.8C467.7 221.0 470.6 222.4 472.5 224.0C474.4 225.6 476.3 227.6 477.1 228.3M456.8 187.6C456.7 188.9 455.7 192.6 455.9 195.4C456.0 198.2 456.8 201.4 457.8 204.2C458.8 206.9 460.1 209.5 461.7 212.0C463.3 214.5 466.0 217.5 467.6 219.3C469.1 221.1 469.7 221.4 471.0 222.7C472.3 224.1 474.8 226.8 475.6 227.6M484.4 158.4C483.6 159.8 480.5 163.7 479.3 166.5C478.1 169.3 477.5 172.3 477.1 175.3C476.7 178.2 476.8 182.6 476.8 184.1M485.9 158.9C485.1 160.1 482.2 163.8 481.0 166.5C479.9 169.2 479.2 172.3 478.8 175.3C478.5 178.2 478.7 182.6 478.7 184.1M477.8 170.0C477.6 171.0 476.5 173.7 476.4 175.9C476.2 178.0 476.4 180.3 476.9 182.7C477.3 185.1 478.1 187.9 479.3 190.5C480.5 193.1 482.6 196.2 484.2 198.3C485.8 200.4 487.5 201.8 489.1 203.2C490.6 204.6 492.7 206.1 493.5 206.6M479.3 170.0C479.1 171.1 478.2 174.6 478.1 176.8C478.0 179.1 478.3 181.5 478.8 183.7C479.3 185.9 480.1 187.7 481.2 190.0C482.4 192.3 484.0 195.2 485.6 197.3C487.3 199.5 489.6 201.4 491.0 202.7C492.5 204.0 493.9 204.9 494.4 205.4M493.9 176.7C495.9 175.0 502.0 169.7 505.6 166.5C509.3 163.3 513.0 159.8 515.9 157.7C518.8 155.6 521.0 154.9 523.2 154.0C525.4 153.2 527.1 153.6 529.1 152.6C531.0 151.6 532.5 149.2 534.9 148.2C537.4 147.2 540.8 147.5 543.7 146.7C546.6 146.0 549.1 144.9 552.5 143.8C555.9 142.7 559.3 141.2 564.2 140.1C569.1 139.0 575.8 138.6 581.8 137.2C587.7 135.9 596.9 132.9 599.9 132.1M481.2 189.0C482.1 188.0 484.3 184.6 486.1 182.7C487.9 180.8 489.9 179.4 492.0 177.8C494.1 176.2 497.0 174.2 498.8 172.9C500.6 171.7 502.1 170.9 502.7 170.5M479.3 174.4C480.9 174.2 485.8 173.3 489.1 172.9C492.3 172.6 497.2 172.5 498.8 172.4M553.5 131.4C554.3 129.9 556.1 125.1 558.3 122.6C560.6 120.0 563.2 117.9 567.1 116.0C571.0 114.0 576.3 112.2 581.8 110.9C587.2 109.5 596.9 108.4 599.9 107.9M580.3 111.6C582.0 112.0 587.6 112.2 590.6 113.8C593.5 115.4 596.2 119.2 597.9 121.1C599.6 123.1 600.3 124.8 600.8 125.5M582.5 110.9C584.2 111.3 589.8 112.0 592.8 113.5C595.7 115.0 598.7 118.6 599.9 119.6M581.0 137.9C581.6 136.7 582.9 132.5 584.7 130.6C586.5 128.8 589.5 127.8 592.0 127.0C594.6 126.1 598.6 125.7 599.9 125.5M590.0 109.5C592.4 109.3 599.8 108.1 604.6 108.1C609.5 108.0 615.4 108.0 619.3 109.1C623.2 110.2 625.4 112.2 628.1 114.6C630.8 117.0 633.6 120.3 635.4 123.4C637.2 126.6 638.6 130.3 639.0 133.7C639.5 137.1 638.7 141.0 638.3 143.9C638.0 146.9 637.1 150.0 636.9 151.2M624.4 110.2C625.7 111.7 630.4 115.9 632.5 119.0C634.5 122.2 636.1 125.6 636.9 129.3C637.6 132.9 637.5 137.5 637.1 141.0C636.8 144.5 635.1 148.9 634.7 150.5M590.0 113.2C591.2 114.2 595.2 116.6 597.3 119.0C599.4 121.5 601.5 125.1 602.4 127.8C603.4 130.5 603.5 132.5 603.2 135.1C602.8 137.8 601.2 141.4 600.2 143.9C599.3 146.5 597.8 149.4 597.3 150.5M590.0 114.6C591.0 115.6 594.1 118.1 595.9 120.5C597.6 122.9 599.4 126.6 600.2 129.3C601.1 132.0 601.3 133.4 601.0 136.6C600.6 139.8 598.5 146.4 598.1 148.3M590.0 127.1L598.8 124.9M590.0 136.6L601.0 132.9M639.8 136.6C640.5 137.1 642.7 138.3 644.2 139.5C645.6 140.8 647.5 142.0 648.6 143.9C649.7 145.9 650.4 148.8 650.8 151.2C651.1 153.7 651.0 156.6 650.8 158.6C650.5 160.5 648.9 161.7 649.3 163.0C649.7 164.2 652.1 164.2 653.0 165.9C653.8 167.6 654.3 170.7 654.4 173.2C654.5 175.7 653.8 179.7 653.7 181.0M649.3 163.0C649.2 164.7 648.6 170.2 648.6 173.2C648.6 176.2 649.2 179.7 649.3 181.0M596.6 150.5C599.9 150.3 609.6 148.9 616.4 149.0C623.1 149.2 633.4 150.9 636.9 151.2M595.5 153.8C595.9 156.3 597.0 164.2 598.0 169.0C598.9 173.9 600.6 180.7 601.2 183.0M601.2 183.0C601.6 182.4 602.4 180.3 603.7 179.2C605.0 178.1 607.4 177.0 608.8 176.7C610.2 176.3 611.8 176.4 612.0 177.3C612.2 178.1 611.4 180.0 610.1 181.7C608.7 183.4 606.0 186.1 603.7 187.5C601.4 188.8 599.1 189.1 596.1 190.0C593.1 190.8 589.5 191.6 585.9 192.5C582.3 193.5 577.3 195.6 574.5 195.7C571.8 195.8 570.4 194.2 569.4 193.2C568.5 192.1 569.5 190.5 568.8 189.4C568.1 188.2 565.9 187.1 565.4 186.2C564.9 185.2 565.4 184.0 565.9 183.6C566.3 183.3 567.5 183.3 568.2 184.3C568.9 185.2 569.8 188.5 570.1 189.4M570.1 189.4C570.4 188.9 571.5 188.3 572.0 186.8C572.5 185.3 573.2 182.6 573.0 180.5C572.8 178.4 571.7 175.8 570.7 174.1C569.7 172.4 568.2 170.8 566.9 170.3C565.6 169.8 564.0 170.1 563.1 170.9C562.1 171.8 561.5 174.6 561.2 175.4M561.2 175.4L557.8 174.8M557.8 174.8C557.9 174.1 558.5 172.3 558.5 170.9C558.6 169.6 558.1 167.2 558.0 166.5M558.0 166.5L545.3 161.4M545.3 161.4L538.7 175.4M538.7 175.4L545.9 180.5M545.9 180.5L544.7 183.6M544.7 183.6C543.9 183.3 541.7 181.6 540.2 181.7C538.8 181.8 536.7 183.0 535.8 184.3C534.8 185.5 534.3 187.5 534.5 189.4C534.7 191.3 535.9 193.9 537.1 195.7C538.2 197.5 540.0 199.1 541.5 200.1C543.0 201.2 544.9 202.1 545.9 202.1C547.0 202.1 547.7 201.0 547.6 200.1C547.5 199.3 545.6 197.9 545.3 197.0C545.0 196.0 545.5 194.8 545.9 194.4C546.4 194.1 547.4 194.3 547.9 195.1C548.3 195.8 547.9 198.0 548.5 198.9C549.1 199.7 550.7 199.4 551.7 200.1C552.6 200.9 553.9 202.2 554.2 203.3C554.5 204.5 554.6 205.6 553.6 207.1C552.5 208.6 549.9 210.7 547.9 212.2C545.8 213.7 543.6 214.7 541.5 216.0C539.4 217.3 537.7 218.0 535.2 220.0C532.6 221.9 527.6 226.3 526.1 227.6M596.1 153.8C596.5 153.0 599.5 151.6 601.2 151.9C602.9 152.2 604.9 154.1 606.2 155.7C607.6 157.3 609.8 160.7 609.4 161.4C609.0 162.2 605.5 160.9 603.7 160.2C601.9 159.4 599.9 158.0 598.6 157.0C597.4 155.9 595.7 154.7 596.1 153.8ZM638.0 153.2C637.6 153.0 635.4 154.3 634.2 155.7C632.9 157.1 630.6 160.6 630.4 161.4C630.2 162.3 631.9 161.5 632.9 160.8C634.0 160.1 635.9 158.3 636.7 157.0C637.6 155.7 638.4 153.4 638.0 153.2ZM638.4 153.8C638.5 155.7 639.2 161.6 639.3 165.2C639.3 168.8 638.9 172.2 638.6 175.4C638.3 178.6 637.6 182.8 637.4 184.3M637.4 184.3C636.6 183.6 634.4 181.6 632.9 180.5C631.4 179.3 629.0 177.3 628.5 177.3C627.9 177.3 628.8 178.9 629.7 180.5C630.7 182.1 632.6 184.9 634.2 186.8C635.8 188.7 637.1 190.4 639.3 191.9C641.4 193.4 645.0 194.9 646.9 195.7C648.8 196.5 650.0 196.8 650.7 197.0M610.1 188.1C612.0 188.2 617.5 188.3 621.5 188.7C625.5 189.1 632.1 190.3 634.2 190.6M650.7 150.0C650.4 153.2 649.1 161.6 648.8 169.0C648.5 176.4 648.8 190.2 648.8 194.4M652.6 162.7L652.0 194.4M558.6 204.6L568.2 200.1M493.5 206.6C492.7 207.5 490.6 210.0 489.1 212.0C487.5 214.0 485.6 216.8 484.2 218.8C482.8 220.8 481.3 223.1 480.8 224.0M477.8 226.9M495.9 204.2C495.8 205.1 496.9 207.3 497.4 209.1C497.9 210.9 498.2 213.5 498.8 214.9C499.5 216.4 500.6 218.2 501.3 217.9C501.9 217.5 502.7 214.8 502.7 213.0C502.7 211.2 501.8 208.7 501.3 207.1C500.7 205.5 499.9 203.8 499.3 203.2C498.7 202.6 498.4 203.5 497.9 203.7C497.3 203.9 496.0 203.3 495.9 204.2ZM499.3 203.2C500.9 204.7 504.8 208.5 508.6 212.0C512.4 215.5 520.0 222.0 522.3 224.0M508.6 212.9L524.7 226.9M486.6 215.9L477.8 226.9M524.7 226.9C525.2 227.5 521.0 230.0 518.8 230.5C516.6 231.0 512.0 230.4 511.5 229.8C511.0 229.1 513.7 227.0 515.9 226.6C518.1 226.1 524.2 226.2 524.7 226.9ZM477.1 230.5C477.9 230.2 481.8 230.6 483.7 231.2C485.6 231.9 488.6 233.3 488.4 234.2C488.1 235.0 484.3 236.1 482.2 236.4C480.1 236.6 476.2 236.2 475.6 235.6C475.0 235.1 478.3 233.9 478.6 233.0C478.8 232.1 476.2 230.8 477.1 230.5ZM466.1 220.3C466.2 221.8 466.3 226.7 466.8 229.8C467.3 232.8 467.6 235.9 469.0 238.6C470.5 241.2 473.9 243.7 475.6 245.9C477.3 248.1 477.9 249.2 479.3 251.7C480.6 254.3 482.9 259.4 483.7 261.0M475.6 235.6C479.4 238.8 494.2 252.5 498.3 254.7C502.5 256.9 499.7 248.8 500.5 248.8C501.4 248.8 502.8 252.6 503.4 254.7C504.1 256.7 504.1 259.9 504.2 261.0M476.4 246.6C477.3 246.9 480.3 246.7 482.2 248.1C484.2 249.4 486.4 252.5 488.1 254.7C489.8 256.8 491.7 259.9 492.5 261.0M476.4 246.6C476.6 247.7 476.6 250.8 477.8 253.2C479.0 255.6 482.7 259.7 483.7 261.0M511.5 248.8L518.8 238.6M652.2 202.0C652.4 203.2 652.9 207.1 653.3 209.3C653.6 211.5 654.2 212.9 654.1 215.1C654.1 217.3 653.2 221.2 653.0 222.5M653.0 180.0C653.3 181.2 655.2 184.9 655.2 187.3C655.2 189.8 653.7 192.9 653.0 194.6C652.2 196.3 651.1 197.1 650.8 197.6M653.0 222.5C654.7 222.6 660.0 221.7 663.2 223.2C666.4 224.7 668.6 228.2 672.0 231.2C675.4 234.3 679.8 238.6 683.7 241.5C687.6 244.4 691.5 246.6 695.4 248.8C699.3 251.0 703.7 253.1 707.1 254.7C710.5 256.3 713.5 257.4 715.9 258.3C718.4 259.3 720.8 259.9 721.8 260.2M513.0 255.0C511.0 257.9 503.0 268.7 501.2 272.6C499.5 276.5 499.5 276.1 502.7 278.4C505.9 280.7 515.4 287.7 520.3 286.5C525.2 285.3 527.6 276.4 532.0 271.1C536.4 265.9 544.2 257.7 546.6 255.0M502.7 278.4C503.0 279.2 502.2 281.1 504.2 282.8C506.1 284.5 511.5 288.1 514.4 288.7C517.3 289.3 520.5 286.8 521.7 286.5M479.3 255.0C480.5 255.7 484.2 258.2 486.6 259.4C489.0 260.6 491.5 260.6 493.9 262.3C496.4 264.0 500.0 268.4 501.2 269.6M489.5 259.4L499.8 268.2" stroke-width="0.8"/>
<path d="M508.6 261.0C510.5 258.2 516.4 248.9 520.3 244.4C524.2 240.0 527.8 237.6 532.0 234.2C536.1 230.8 540.5 227.3 545.2 223.9C549.8 220.5 554.9 216.8 559.8 213.7C564.7 210.5 569.6 207.3 574.5 204.9C579.3 202.4 584.1 200.3 589.1 199.0C594.1 197.8 599.6 197.7 604.6 197.3C609.7 196.9 614.4 196.5 619.3 196.5C624.2 196.6 629.5 197.1 633.9 197.7C638.3 198.4 642.6 199.6 645.6 200.4C648.7 201.1 651.1 201.7 652.2 202.0" stroke-width="0.75"/>
<path d="M540.8 261.0C542.7 258.9 548.1 252.5 552.5 248.8C556.9 245.1 562.2 241.6 567.1 238.6C572.0 235.5 577.1 232.7 581.8 230.5C586.4 228.3 591.6 226.9 594.9 225.4C598.3 223.9 598.1 222.4 601.7 221.4C605.3 220.5 611.5 220.0 616.4 219.7C621.2 219.3 625.9 219.3 631.0 219.2C636.1 219.2 643.4 218.7 647.1 219.2C650.8 219.8 652.0 221.9 653.0 222.5" stroke-width="0.9"/>
<path d="M592.8 215.1C592.8 216.7 592.3 218.5 591.6 219.9C590.8 221.3 589.6 222.6 588.4 223.4C587.1 224.2 585.4 224.7 584.0 224.7C582.5 224.7 580.8 224.2 579.6 223.4C578.3 222.6 577.1 221.3 576.4 219.9C575.6 218.5 575.2 216.7 575.2 215.1C575.2 213.6 575.6 211.8 576.4 210.4C577.1 209.0 578.3 207.7 579.6 206.9C580.8 206.1 582.5 205.6 584.0 205.6C585.4 205.6 587.1 206.1 588.4 206.9C589.6 207.7 590.8 209.0 591.6 210.4C592.3 211.8 592.8 213.6 592.8 215.1ZM567.6 232.1C566.8 233.1 565.6 233.9 564.4 234.2C563.2 234.6 561.6 234.6 560.3 234.3C559.0 234.1 557.6 233.3 556.6 232.5C555.5 231.6 554.6 230.3 554.1 229.1C553.5 227.8 553.3 226.3 553.5 225.1C553.6 223.8 554.2 222.5 555.0 221.6C555.8 220.6 557.0 219.9 558.2 219.5C559.4 219.1 560.9 219.1 562.2 219.4C563.5 219.7 564.9 220.4 566.0 221.2C567.0 222.1 568.0 223.4 568.5 224.6C569.0 225.9 569.2 227.4 569.1 228.6C568.9 229.9 568.3 231.2 567.6 232.1ZM548.4 247.1C547.7 247.9 546.7 248.5 545.7 248.7C544.7 248.9 543.3 248.9 542.2 248.6C541.0 248.2 539.7 247.5 538.8 246.7C537.8 245.9 536.9 244.7 536.4 243.7C535.8 242.6 535.5 241.3 535.6 240.2C535.7 239.2 536.1 238.1 536.7 237.3C537.3 236.6 538.3 236.0 539.4 235.7C540.4 235.5 541.7 235.6 542.9 235.9C544.0 236.2 545.3 236.9 546.3 237.7C547.3 238.6 548.2 239.7 548.7 240.8C549.2 241.9 549.5 243.2 549.5 244.2C549.4 245.3 549.0 246.4 548.4 247.1ZM615.2 210.0C615.2 211.5 614.8 213.1 614.2 214.4C613.5 215.7 612.5 216.9 611.4 217.6C610.3 218.4 608.8 218.8 607.6 218.8C606.3 218.8 604.9 218.4 603.8 217.6C602.7 216.9 601.6 215.7 601.0 214.4C600.3 213.1 600.0 211.5 600.0 210.0C600.0 208.6 600.3 206.9 601.0 205.6C601.6 204.4 602.7 203.1 603.8 202.4C604.9 201.7 606.3 201.2 607.6 201.2C608.8 201.2 610.3 201.7 611.4 202.4C612.5 203.1 613.5 204.4 614.2 205.6C614.8 206.9 615.2 208.6 615.2 210.0ZM630.7 210.0C630.7 211.4 630.5 213.0 630.1 214.3C629.7 215.5 629.1 216.7 628.5 217.4C627.9 218.1 627.0 218.5 626.3 218.5C625.6 218.5 624.7 218.1 624.1 217.4C623.5 216.7 622.9 215.5 622.5 214.3C622.1 213.0 621.9 211.4 621.9 210.0C621.9 208.6 622.1 207.0 622.5 205.8C622.9 204.5 623.5 203.4 624.1 202.7C624.7 202.0 625.6 201.5 626.3 201.5C627.0 201.5 627.9 202.0 628.5 202.7C629.1 203.4 629.7 204.5 630.1 205.8C630.5 207.0 630.7 208.6 630.7 210.0ZM639.0 218.9C639.0 217.8 638.4 214.3 638.6 212.2C638.9 210.1 639.8 207.6 640.5 206.4C641.2 205.1 642.1 204.8 643.0 204.9C643.9 205.0 645.0 205.7 645.6 207.1C646.3 208.4 646.7 211.0 646.8 212.9C647.0 214.9 646.6 217.9 646.5 218.9M521.6 278.1C521.1 278.7 520.2 279.2 519.2 279.4C518.3 279.5 517.1 279.4 516.0 279.0C514.9 278.6 513.6 277.9 512.7 277.1C511.7 276.3 510.8 275.2 510.3 274.2C509.7 273.2 509.3 272.0 509.3 271.1C509.3 270.1 509.6 269.1 510.2 268.5C510.7 267.9 511.6 267.4 512.5 267.2C513.5 267.1 514.7 267.2 515.8 267.6C516.9 268.0 518.1 268.7 519.1 269.5C520.0 270.3 521.0 271.4 521.5 272.4C522.1 273.4 522.4 274.6 522.4 275.6C522.5 276.5 522.1 277.5 521.6 278.1ZM532.6 263.6C532.0 264.2 531.2 264.5 530.3 264.6C529.4 264.6 528.3 264.4 527.3 263.9C526.3 263.5 525.2 262.7 524.4 261.9C523.6 261.0 522.8 259.9 522.3 259.0C521.9 258.0 521.6 256.8 521.7 256.0C521.7 255.1 522.1 254.2 522.6 253.7C523.2 253.2 524.0 252.8 524.9 252.8C525.8 252.7 526.9 252.9 527.9 253.4C528.9 253.8 530.0 254.6 530.8 255.5C531.6 256.3 532.4 257.4 532.9 258.4C533.3 259.4 533.6 260.5 533.5 261.4C533.5 262.2 533.1 263.1 532.6 263.6Z" stroke-width="0.95"/>
<path d="M555.0 248.4C556.6 247.3 561.5 243.8 564.8 241.6C568.0 239.4 571.3 237.1 574.5 235.3C577.8 233.4 581.4 231.6 584.3 230.4C587.2 229.2 588.9 228.3 592.1 227.9C595.4 227.6 599.9 228.0 603.8 228.4C607.7 228.8 611.6 229.6 615.5 230.4C619.5 231.2 623.7 232.2 627.3 233.3C630.8 234.4 634.1 235.4 637.0 236.7C640.0 238.0 642.7 239.3 644.8 241.1C647.0 242.9 648.6 244.8 649.7 247.5C650.9 250.1 651.4 255.6 651.7 257.2" stroke-width="1.3"/>
<path d="M601.7 311.4C604.6 311.1 613.2 311.0 619.3 309.9C625.4 308.8 632.2 306.9 638.3 304.8C644.4 302.7 649.8 300.0 655.9 297.5C662.0 294.9 668.8 292.0 674.9 289.4C681.0 286.8 687.1 283.9 692.5 282.1C697.9 280.3 702.7 279.3 707.1 278.4C711.5 277.6 715.3 277.2 718.8 277.0C722.4 276.7 726.8 277.0 728.4 277.0" stroke-width="2.7"/>
<path d="M590.6 254.3C592.4 252.1 598.4 247.2 601.9 246.0C605.4 244.8 608.7 246.1 611.6 247.0C614.6 247.9 616.9 249.8 619.5 251.4C622.0 252.9 626.8 254.5 626.8 256.2C626.8 258.0 622.0 260.5 619.5 262.1C616.9 263.7 614.4 265.0 611.6 266.0C608.9 267.1 605.6 268.6 602.9 268.5C600.1 268.3 597.0 266.6 595.0 265.0C593.1 263.5 591.9 261.0 591.1 259.2C590.4 257.4 588.9 256.5 590.6 254.3Z" stroke-width="1.2"/>
<path d="M601.9 246.0C601.6 247.4 600.6 251.6 600.4 254.3C600.2 257.0 600.4 259.7 600.9 262.1C601.4 264.5 602.9 267.4 603.3 268.5M610.2 248.4C610.4 249.7 611.6 253.8 611.6 256.2C611.7 258.7 610.8 261.9 610.7 263.1M617.5 252.8L617.5 260.2" stroke-width="1.0"/>
</svg>

<!-- tab bar -->
<div id="tabbar">
  <div id="doctab">
    <span class="t" style="left:5px;top:2.8px;font-weight:bold;font-size:6.2px;color:#dadada;transform:scaleX(0.9191);transform-origin:0 50%;">Lizard Line Work.tif @ 100% (CMYK/GPU Preview)</span>
    <svg style="left:143.6px;top:4.2px" width="4.4" height="4.4" viewBox="0 0 5 5"><path d="M0.7 0.7 L4.3 4.3 M4.3 0.7 L0.7 4.3" stroke="#dcdcdc" stroke-width="0.9" fill="none"/></svg>
  </div>
</div>

<!-- vertical scrollbar -->
<div id="vscroll">
  <div style="left:0.5px;top:253px;width:7.5px;height:13px;border-radius:3.5px;background:#626262;"></div>
  <svg style="left:2px;top:510px" width="5" height="4" viewBox="0 0 5 4"><path d="M0.8 0.8 L2.5 2.6 L4.2 0.8" stroke="#8a8a8a" stroke-width="0.7" fill="none"/></svg>
</div>

<!-- status bar -->
<div id="statusbar">
  <div style="left:0;top:0;width:854px;height:0.6px;background:#474747;"></div>
  <div style="left:2px;top:1.2px;width:24.6px;height:6px;background:#444;"></div>
  <span class="t" style="left:3.9px;top:1.7px;font-size:5.6px;color:#ddd;transform:scaleX(0.9293);transform-origin:0 50%;">100%</span>
  <div style="left:27.8px;top:1.2px;width:7.5px;height:6px;background:#454545;"></div>
  <svg style="left:29.2px;top:3.6px" width="5" height="4" viewBox="0 0 5 4"><path d="M0.6 0.6 L2.4 2.4 L4.2 0.6" stroke="#ddd" stroke-width="0.9" fill="none"/></svg>
  <svg style="left:40.5px;top:2.4px" width="14" height="5" viewBox="0 0 14 5"><path d="M1 0.5V5 M4.2 0.5 L1.8 2.8 L4.2 5 M11.5 0.5 L9 2.8 L11.5 5" stroke="#7a7a7a" stroke-width="0.7" fill="none"/></svg>
  <div style="left:57px;top:1.2px;width:20px;height:6px;background:#444;"></div>
  <span class="t" style="left:59.4px;top:1.7px;font-size:5.6px;color:#ddd;">1</span>
  <div style="left:78px;top:1.2px;width:8px;height:6px;background:#454545;"></div>
  <svg style="left:79.7px;top:3.6px" width="5" height="4" viewBox="0 0 5 4"><path d="M0.6 0.6 L2.4 2.4 L4.2 0.6" stroke="#ddd" stroke-width="0.9" fill="none"/></svg>
  <svg style="left:90.5px;top:2.4px" width="14" height="5" viewBox="0 0 14 5"><path d="M1.5 0.5 L4 2.8 L1.5 5 M8.5 0.5 L11 2.8 L8.5 5 M12 0.5V5" stroke="#6e6e6e" stroke-width="0.7" fill="none"/></svg>
  <div style="left:107.4px;top:1.2px;width:99.6px;height:6px;background:#4c4c4c;"></div>
  <span class="t" style="left:147.2px;top:1.7px;font-size:5.6px;color:#ddd;transform:scaleX(0.8950);transform-origin:0 50%;">Selection</span>
  <svg style="left:211px;top:2.6px" width="4" height="5" viewBox="0 0 4 5"><path d="M0.6 0.3 L3.4 2.6 L0.6 5Z" fill="#e0e0e0"/></svg>
  <svg style="left:219px;top:2.4px" width="4" height="5" viewBox="0 0 4 5"><path d="M2.6 0.5 L0.8 2.6 L2.6 4.8" stroke="#8a8a8a" stroke-width="0.7" fill="none"/></svg>
  <svg style="left:848px;top:2.4px" width="4" height="5" viewBox="0 0 4 5"><path d="M1 0.5 L2.8 2.6 L1 4.8" stroke="#8a8a8a" stroke-width="0.7" fill="none"/></svg>
</div>
<div style="left:889px;top:548px;width:8px;height:7px;background:#595959;"></div>

<div id="toolbar">
  <div id="toolhead"></div>
  <svg style="left:1.8px;top:2.2px" width="4" height="2" viewBox="0 0 4 2"><path d="M1.5 0 V1.8 L0.2 0.9Z M3.3 0 V1.8 L2 0.9Z" fill="#d0d0d0"/></svg>
  <div style="left:11px;top:8.6px;width:11px;height:1px;background:repeating-linear-gradient(90deg,#3f3f3f 0 1px,transparent 1px 2px);"></div>
  <svg style="left:0;top:0" width="35" height="200" viewBox="0 15 35 200" fill="none" stroke="#d9d9d9" stroke-width="0.8" stroke-linejoin="round" stroke-linecap="round">
    <!-- small corner triangles -->
    <g fill="#c8c8c8" stroke="none">
      <path d="M30.2 43v-1.6h-1.6z M15.4 54.5v-1.6h-1.6z M15.4 66.5v-1.6h-1.6z M30.2 66.5v-1.6h-1.6z M15.4 78v-1.6h-1.6z M30.2 78v-1.6h-1.6z M15.4 90v-1.6h-1.6z M15.4 102v-1.6h-1.6z M30.2 126v-1.6h-1.6z"/>
    </g>
    <!-- row1 y~38 : direct-selection (outline) & selection (filled) -->
    <path d="M6.5 33.5 L6.5 42.3 L8.8 40.2 L12.6 39.2 Z"/>
    <path d="M20.5 33 L20.5 42.5 L23 40.3 L27.6 39.4 Z" fill="#d9d9d9"/>
    <!-- row2 y~49.5 : pen & curvature -->
    <path d="M5.2 53.6 L6 49.6 L10.2 45.8 L13 48.6 L9.2 52.8 Z" fill="#d9d9d9"/>
    <path d="M5.4 53.4 L8.6 50.2" stroke="#535353" stroke-width="0.6"/>
    <path d="M20.8 53.6 L21.6 49.6 L25.6 45.8 L28.4 48.6 L24.6 52.8 Z" fill="#d9d9d9"/>
    <path d="M19.2 46.2 C18.4 48.8 20.4 49.8 19.6 52.8" stroke-width="0.7"/>
    <!-- row3 y~61.5 : rectangle & brush -->
    <rect x="5.2" y="57.6" width="8.6" height="7.2" fill="#7d7d7d"/>
    <path d="M27.6 56.4 L23.4 61.4" stroke-width="1.5"/>
    <path d="M22.8 62 C21.6 62.2 21 63.4 20.4 65 C22.2 65.2 23.6 64.4 23.8 63 Z" fill="#d9d9d9" stroke-width="0.5"/>
    <!-- row4 y~73 : type & rotate -->
    <text x="5.2" y="76.8" font-family="Liberation Serif, serif" font-size="10" fill="#d6d6d6" stroke="none">T</text>
    <path d="M21.6 70.2 A4.1 4.1 0 1 1 20.9 75.6" stroke-width="0.8" stroke="#a4a4a4"/>
    <path d="M20.4 68.6 L21.4 70.8 L23.6 70.2" stroke-width="0.7" stroke="#a4a4a4"/>
    <!-- row5 y~85 : eraser & shape builder -->
    <path d="M5 86.2 L9.8 80.6 L13.4 83.2 L9.2 88.8 Z" fill="#d9d9d9"/>
    <path d="M6.2 84.6 L10 87.6" stroke="#535353" stroke-width="0.7"/>
    <path d="M19.6 83.6 C19.6 81.8 22 80.8 24.4 81.4 C26.6 82 27.6 83.4 27 84.8 C26.2 86.6 23.4 87.2 21.4 86.4 C20 85.8 19.6 84.8 19.6 83.6 Z M21 82.2 L21.6 86.4 M24.8 81.6 L24.6 85"/>
    <path d="M24.6 84.4 L24.8 89.4 L26.2 88 L28.6 87.8 Z" fill="#d9d9d9" stroke-width="0.4"/>
    <!-- row6 y~97 : gradient & eyedropper -->
    <defs><linearGradient id="gr1" x1="0" x2="1" y1="0" y2="0"><stop offset="0" stop-color="#2b2b2b"/><stop offset="1" stop-color="#e4e4e4"/></linearGradient></defs>
    <rect x="5.4" y="93.4" width="8" height="7.2" fill="url(#gr1)"/>
    <path d="M27.2 92.6 C28.2 93.4 28 94.4 27.2 95 L25.8 96.2 L24.2 94.8 L25.4 93.2 C26 92.4 26.6 92.2 27.2 92.6 Z" fill="#d9d9d9" stroke-width="0.4"/>
    <path d="M24.6 95.4 L21 99.4 L20.4 101 L22 100.4 L25.6 96.4" stroke-width="0.7"/>
    <!-- row7 y~109 : symbol sprayer / blend -->
    <path d="M5 111.6 C6.2 110 7.4 109.8 8.2 110.6 C9 111.4 9.8 111.6 10.6 110.4 M6.4 106 L7.6 107.8 L9.4 107 M8.4 108.8 L11.8 106.6 L12.8 108 M7.4 112.6 L9.4 113.4 M10.6 108.6 L11.6 112.6" stroke-width="0.9"/>
    <rect x="19.6" y="105.6" width="4" height="3.4" fill="#d9d9d9" stroke-width="0.4"/>
    <path d="M22.2 107.4 H25.4 V111 H22.2Z" stroke-width="0.7"/>
    <ellipse cx="26" cy="111.4" rx="2.6" ry="2.1" stroke-width="0.8" fill="#535353"/>
    <!-- row8 y~121 : artboard & zoom -->
    <path d="M6.6 116.8 V124.6 H13.6 M5 118.6 H11.8 V124.6" stroke-width="0.8"/>
    <path d="M8.6 118.6 L11.8 121 " stroke-width="0.5"/>
    <circle cx="23.2" cy="119.8" r="3" stroke-width="0.9"/>
    <path d="M25.4 122 L28.2 124.8" stroke-width="1.2"/>
    
    <!-- fill/stroke -->
    <rect x="11.4" y="140.8" width="16.6" height="16.6" fill="#000" stroke="none"/>
    <rect x="15.4" y="145.2" width="8.4" height="8.2" fill="#5a5a5a" stroke="#2a2a2a" stroke-width="0.5"/>
    <rect x="1.9" y="131.2" width="17.4" height="17" fill="#fff" stroke="#e8e8e8" stroke-width="0.4"/>
    <path d="M24.2 133 C26.6 132.8 27.6 134.2 27.4 136.6" stroke-width="0.9" stroke="#cfcfcf"/>
    <path d="M25.4 131.6 L23.8 133 L25.4 134.4 M26 135.6 L27.4 137.2 L28.6 135.6" stroke-width="0.7" stroke="#cfcfcf"/>
    <rect x="4.2" y="153.2" width="4.2" height="4.2" fill="#222" stroke="#d0d0d0" stroke-width="0.5"/>
    <rect x="2.2" y="151.2" width="4" height="4" fill="#f4f4f4" stroke="#3a3a3a" stroke-width="0.4"/>
    <!-- colour / gradient / none -->
    <rect x="2.2" y="162.4" width="8.4" height="8" fill="#333" stroke="none"/>
    <rect x="3.4" y="163.6" width="6" height="5.6" fill="#fafafa" stroke="none"/>
    <rect x="12.6" y="162.4" width="8.4" height="8" fill="#3a3a3a" stroke="none"/>
    <defs><linearGradient id="gr2" x1="0" x2="1" y1="0" y2="0"><stop offset="0" stop-color="#f4f4f4"/><stop offset="1" stop-color="#2c2c2c"/></linearGradient></defs>
    <rect x="13.8" y="163.6" width="6" height="5.6" fill="url(#gr2)" stroke="none"/>
    <rect x="22.8" y="162.4" width="8.4" height="8" fill="#3a3a3a" stroke="none"/>
    <rect x="24" y="163.6" width="6" height="5.6" fill="#fafafa" stroke="none"/>
    <path d="M24.2 169 L29.8 163.8" stroke="#e8141c" stroke-width="1.5" stroke-linecap="butt"/>
    <!-- draw modes -->
    <rect x="2.2" y="173.4" width="8.6" height="8.6" fill="#3c3c3c" stroke="none"/>
    <circle cx="5.6" cy="176.8" r="1.9" stroke-width="0.6" fill="#bdbdbd"/>
    <rect x="5.8" y="177" width="3.4" height="3.2" stroke-width="0.6" fill="#3c3c3c"/>
    <rect x="12.4" y="173.4" width="19" height="8.6" fill="none" stroke="#5e5e5e" stroke-width="0.4"/>
    <circle cx="15.8" cy="176.8" r="1.9" stroke-width="0.6" stroke="#bdbdbd"/>
    <rect x="16" y="177" width="3.4" height="3.2" stroke-width="0.6" fill="#535353" stroke="#bdbdbd"/>
    <circle cx="26.4" cy="177.6" r="1.9" stroke-width="0.6" stroke="#6e6e6e"/>
    <!-- screen mode -->
    <rect x="14.6" y="187" width="7.4" height="5.4" stroke-width="0.7" stroke="#bdbdbd" fill="#535353"/>
    <path d="M14.6 188.2 H22" stroke-width="0.6" stroke="#bdbdbd"/>
    <rect x="11.4" y="189.6" width="7" height="5" stroke-width="0.7" stroke="#bdbdbd" fill="#626262"/>
    <!-- dots -->
    <g fill="#cfcfcf" stroke="none"><rect x="13.2" y="206.2" width="1.4" height="1.4"/><rect x="15.8" y="206.2" width="1.4" height="1.4"/><rect x="18.4" y="206.2" width="1.4" height="1.4"/></g>
    <path d="M0 213.6 H34" stroke="#454545" stroke-width="0.6"/>
  </svg>
</div>

<div id="layers">
  <div style="left:0;top:0;width:178.5px;height:6.6px;background:#424242;"></div>
  <svg style="left:163.6px;top:2.2px" width="4" height="2" viewBox="0 0 4 2"><path d="M1.5 0 V1.8 L0.2 0.9Z M3.3 0 V1.8 L2 0.9Z" fill="#d0d0d0"/></svg>
  <svg style="left:172.2px;top:1.2px" width="4.4" height="4.4" viewBox="0 0 5 5"><path d="M0.7 0.7 L4.3 4.3 M4.3 0.7 L0.7 4.3" stroke="#d0d0d0" stroke-width="0.8" fill="none"/></svg>
  <div style="left:0;top:6.6px;width:178.5px;height:13.2px;background:#424242;border-top:0.5px solid #383838;"></div>
  <div style="left:0;top:7px;width:24.2px;height:13px;background:#535353;"></div>
  <span class="t" style="left:5.3px;top:9.45px;font-size:5.5px;font-weight:bold;color:#e4e4e4;transform:scaleX(0.7887);transform-origin:0 50%;">Layers</span>
  <svg style="left:169.5px;top:11.4px" width="6" height="5" viewBox="0 0 6 5"><path d="M0.3 0.6H5.3 M0.3 2.2H5.3 M0.3 3.8H5.3" stroke="#8c8c8c" stroke-width="0.7"/></svg>
  <!-- list -->
  <div style="left:3px;top:23px;width:172.5px;height:228.5px;background:#515151;border:0.5px solid #5b5b5b;"></div>
  <div style="left:3.3px;top:23.7px;width:171.7px;height:9.4px;background:#4a6484;"></div>
  <div style="left:3.3px;top:23.7px;width:10.2px;height:9.4px;background:#4f6a8c;"></div>
  <div style="left:13.6px;top:23.7px;width:10px;height:9.4px;background:#4f6a8c;"></div>
  <svg style="left:4.6px;top:25.6px" width="8" height="6" viewBox="0 0 8 6"><path d="M0.5 2.8 C2 0.4 6 0.4 7.5 2.8 C6 5.2 2 5.2 0.5 2.8Z" fill="#e4e4e4"/><circle cx="4" cy="2.8" r="1.3" fill="#4a6484"/><circle cx="4" cy="2.8" r="0.6" fill="#e4e4e4"/></svg>
  <div style="left:25.2px;top:23.9px;width:1.6px;height:9px;background:#f0464d;"></div>
  <svg style="left:29.6px;top:25.8px" width="4" height="6" viewBox="0 0 4 6"><path d="M0.8 0.7 L3 2.8 L0.8 4.9" stroke="#e8e8e8" stroke-width="0.8" fill="none"/></svg>
  <div style="left:40.2px;top:24.4px;width:8px;height:8px;background:#fafafa;border:0.5px solid #2a2a2a;"></div>
  <svg style="left:41.5px;top:25.4px" width="6" height="6" viewBox="0 0 6 6"><path d="M1.4 2 C1.6 0.8 3.8 0.6 4 1.8 L4.6 3.4 L3.6 3.8 L4 5.4 L2.2 4.6 L1.8 3 Z" stroke="#777" stroke-width="0.4" fill="none"/></svg>
  <span class="t" style="left:51px;top:24.8px;font-size:5.2px;color:#f0f0f0;transform:scaleX(0.9647);transform-origin:0 50%;">Layer 0 Image</span>
  <svg style="left:160.6px;top:26.2px" width="5" height="5" viewBox="0 0 5 5"><rect x="0.8" y="0.8" width="3.2" height="3.2" rx="1.2" stroke="#e4e4e4" stroke-width="0.8" fill="none"/></svg><div style="left:157px;top:23.7px;width:0.5px;height:9.4px;background:#44597a;"></div>
  <svg style="left:171.6px;top:23.7px" width="4" height="4" viewBox="0 0 4 4"><path d="M0.2 0 H3.6 V3.4 Z" fill="#f0f0f0"/></svg>
  <!-- footer -->
  <span class="t" style="left:3.3px;top:253.3px;font-size:5.2px;color:#e0e0e0;transform:scaleX(0.9242);transform-origin:0 50%;">1 Layer</span>
  <svg style="left:94px;top:253px" width="80" height="9" viewBox="0 0 80 9" fill="none" stroke-width="0.7">
    <g transform="translate(-2.5,0)"><path d="M5.4 2.4 H2.4 V7.6 H7.8 V4.8" stroke="#e0e0e0"/><path d="M5 4.8 L8 1.6 M6 1.4 H8.2 V3.6" stroke="#e0e0e0"/>
    <circle cx="17.4" cy="3.8" r="1.9" stroke="#737373"/><path d="M18.8 5.2 L20.8 7.4" stroke="#737373"/>
    <path d="M28.6 2 H32 V6.4 H28.6Z M30 4 H33.4 V7.8 H30" stroke="#737373" stroke-width="0.6"/>
    <path d="M40 2.6 H42.6 M41.6 1.4 L42.8 2.6 L41.6 3.8" stroke="#e0e0e0"/><rect x="43.6" y="2.6" width="4.6" height="4.4" stroke="#e0e0e0"/><path d="M42.6 5.6 H46.2" stroke="#e0e0e0" stroke-width="0.5"/></g>
    <rect x="53" y="1.6" width="5.6" height="5.8" stroke="#e6e6e6" stroke-width="0.8"/><path d="M55.8 3.4 V5.6 M54.7 4.5 H56.9" stroke="#e6e6e6" stroke-width="0.6"/>
    <path d="M65.6 2.6 H70 M66.2 2.6 V7.4 H69.4 V2.6 M67 1.6 H68.6" stroke="#6c6c6c"/>
  </svg>
  <div style="left:0;top:262.5px;width:178.5px;height:4px;background:#484848;border-top:0.5px solid #3e3e3e;"></div>
  <div style="left:85px;top:264px;width:9px;height:1px;background:repeating-linear-gradient(90deg,#333 0 1px,transparent 1px 2px);"></div>
</div>

<div id="rightpanel">
  <div style="left:0;top:0;width:126px;height:6.3px;background:#424242;"></div>
  <svg style="left:119px;top:2.3px" width="4" height="2" viewBox="0 0 4 2"><path d="M0.2 0 V1.8 L1.5 0.9Z M2 0 V1.8 L3.3 0.9Z" fill="#d0d0d0"/></svg>
  <div style="left:0;top:6.3px;width:126px;height:14px;background:#424242;border-top:0.5px solid #383838;"></div>
  <div style="left:61.5px;top:6.8px;width:0.6px;height:13.5px;background:#4c4c4c;"></div>
  <span class="t" style="left:38.2px;top:9.4px;font-size:5.5px;font-weight:bold;color:#8c8c8c;transform:scaleX(0.7876);transform-origin:0 50%;">Libraries</span>
</div>

<div id="topbar">
  <!-- Ai logo -->
  <div style="left:3.7px;top:3.4px;width:7.8px;height:7.8px;background:#470a0a;border-radius:1.4px;"></div>
  <span class="t" style="left:5.1px;top:3.4px;font-size:5.2px;font-weight:bold;color:#ff9a00;letter-spacing:-0.1px;">Ai</span>
  <!-- home -->
  <svg style="left:18px;top:3px" width="11" height="10" viewBox="0 0 11 10"><path d="M5.5 0.8 L0.6 5.2 H2 V9.2 H4.6 V6.4 H6.4 V9.2 H9 V5.2 H10.4 Z" fill="#d4d4d4"/></svg>
  <div style="left:35px;top:3px;width:0.6px;height:9px;background:#616161;"></div>
  <span class="t m" style="left:43.1px;transform:scaleX(0.9115);transform-origin:0 50%;">File</span>
  <span class="t m" style="left:59.8px;transform:scaleX(0.9532);transform-origin:0 50%;">Edit</span>
  <span class="t m" style="left:77.2px;transform:scaleX(0.9630);transform-origin:0 50%;">Object</span>
  <span class="t m" style="left:102.4px;transform:scaleX(0.9091);transform-origin:0 50%;">Type</span>
  <span class="t m" style="left:121.9px;transform:scaleX(0.9119);transform-origin:0 50%;">Select</span>
  <span class="t m" style="left:145.6px;transform:scaleX(0.9178);transform-origin:0 50%;">Effect</span>
  <span class="t m" style="left:168px;transform:scaleX(0.8945);transform-origin:0 50%;">View</span>
  <span class="t m" style="left:187.5px;transform:scaleX(0.9765);transform-origin:0 50%;">Window</span>
  <span class="t m" style="left:216.4px;transform:scaleX(0.9577);transform-origin:0 50%;">Help</span>
  <div style="left:235px;top:3px;width:0.6px;height:9px;background:#616161;"></div>
  <!-- layout icon -->
  <svg style="left:241px;top:4px" width="10" height="7" viewBox="0 0 10 7"><path d="M0.3 0.3H4.3V6H0.3Z M5 0.3H9V2.8H5Z M5 3.5H9V6H5Z" fill="#d8d8d8"/></svg>
  <svg style="left:254px;top:5.6px" width="5" height="4" viewBox="0 0 5 4"><path d="M0.6 0.8 L2.3 2.5 L4 0.8" stroke="#d8d8d8" stroke-width="0.8" fill="none"/></svg>
  <!-- light bulb -->
  <svg style="left:825px;top:2.5px" width="9" height="11" viewBox="0 0 9 11"><path d="M4.5 0.8 C2.6 0.8 1.5 2.2 1.5 3.7 C1.5 5 2.4 5.7 2.9 6.6 V7.6 H6.1 V6.6 C6.6 5.7 7.5 5 7.5 3.7 C7.5 2.2 6.4 0.8 4.5 0.8 Z M3.2 8.6 H5.8 M3.6 9.7 H5.4" stroke="#c8c8c8" stroke-width="0.7" fill="none"/></svg>
  <!-- Essentials button -->
  <div style="left:842.4px;top:2px;width:41.6px;height:9.6px;background:#3a3a3a;border-radius:1px;"></div>
  <span class="t" style="left:845.9px;top:2.9px;color:#e2e2e2;font-size:6.2px;transform:scaleX(0.9325);transform-origin:0 50%;">Essentials</span>
  <svg style="left:875.5px;top:5.8px" width="5" height="4" viewBox="0 0 5 4"><path d="M0.6 0.8 L2.3 2.5 L4 0.8" stroke="#d8d8d8" stroke-width="0.8" fill="none"/></svg>
  <!-- search -->
  <div style="left:891.4px;top:2.4px;width:84.2px;height:9.2px;background:#464646;border-radius:1.2px;border:0.5px solid #595959;"></div>
  <svg style="left:893px;top:4px" width="10" height="7" viewBox="0 0 10 7"><circle cx="2.6" cy="2.6" r="1.7" stroke="#c4c4c4" stroke-width="0.8" fill="none"/><path d="M3.9 3.9 L5.6 5.8" stroke="#c4c4c4" stroke-width="0.9"/><path d="M6.5 2.6 L7.6 3.7 L8.7 2.6" stroke="#c4c4c4" stroke-width="0.6" fill="none"/></svg>
  <span class="t" style="left:903.7px;top:3.2px;color:#737373;font-size:6.2px;transform:scaleX(0.8809);transform-origin:0 50%;">Search Adobe Stock</span>
  <!-- window controls -->
  <div style="left:980.7px;top:-1px;width:44px;height:10.7px;border:0.5px solid #5d5d5d;border-radius:2px;"></div>
  <div style="left:984.8px;top:5px;width:5.3px;height:1.9px;background:#c9c9c9;"></div>
  <svg style="left:997px;top:1px" width="9" height="8" viewBox="0 0 9 8"><path d="M3.2 2.6 V1.5 H7.6 V5.4 H6.4" stroke="#c9c9c9" stroke-width="0.9" fill="none"/><rect x="1.5" y="3" width="4.6" height="3.6" stroke="#c9c9c9" stroke-width="1" fill="none"/></svg>
  <svg style="left:1012px;top:1.5px" width="7" height="7" viewBox="0 0 7 7"><path d="M1.1 1 L5.7 5.4 M5.7 1 L1.1 5.4" stroke="#d0d0d0" stroke-width="1.1" fill="none"/></svg>
</div>

<div id="menu">
  <div style="left:1.2px;top:10.8px;width:9.3px;height:9.4px;background:#91c9f7;"></div>
  <svg style="left:2.6px;top:12.6px" width="7" height="6" viewBox="0 0 7 6"><path d="M0.8 3 L2.6 4.8 L6.2 0.9" stroke="#2d5b8a" stroke-width="1" fill="none"/></svg>
  <div style="left:1.1px;top:58.9px;width:93.8px;height:9.6px;background:#91c9f7;"></div>
  <span class="t" style="top:2.15px;transform:scaleX(1.0028);transform-origin:0 50%;">Automation</span>
  <span class="t" style="top:11.75px;transform:scaleX(0.8864);transform-origin:0 50%;">Essentials</span>
  <span class="t" style="top:21.25px;transform:scaleX(0.8842);transform-origin:0 50%;">Essentials Classic</span>
  <span class="t" style="top:30.75px;transform:scaleX(0.9312);transform-origin:0 50%;">Layout</span>
  <span class="t" style="top:40.35px;transform:scaleX(0.9296);transform-origin:0 50%;">Painting</span>
  <span class="t" style="top:49.85px;transform:scaleX(0.9724);transform-origin:0 50%;">Printing and Proofing</span>
  <span class="t" style="top:59.85px;transform:scaleX(0.9311);transform-origin:0 50%;">Tracing</span>
  <span class="t" style="top:69.45px;transform:scaleX(0.9615);transform-origin:0 50%;">Typography</span>
  <span class="t" style="top:78.85px;transform:scaleX(0.9188);transform-origin:0 50%;">Web</span>
  <span class="t" style="top:91.45px;transform:scaleX(0.8895);transform-origin:0 50%;">Reset Essentials</span>
  <span class="t" style="top:100.95px;transform:scaleX(0.9223);transform-origin:0 50%;">New Workspace...</span>
  <span class="t" style="top:110.35px;transform:scaleX(0.9086);transform-origin:0 50%;">Manage Workspaces...</span>
  <div style="left:13px;top:88.6px;width:82px;height:0.5px;background:#cfcfcf;"></div>
</div>

</body>
</html>
